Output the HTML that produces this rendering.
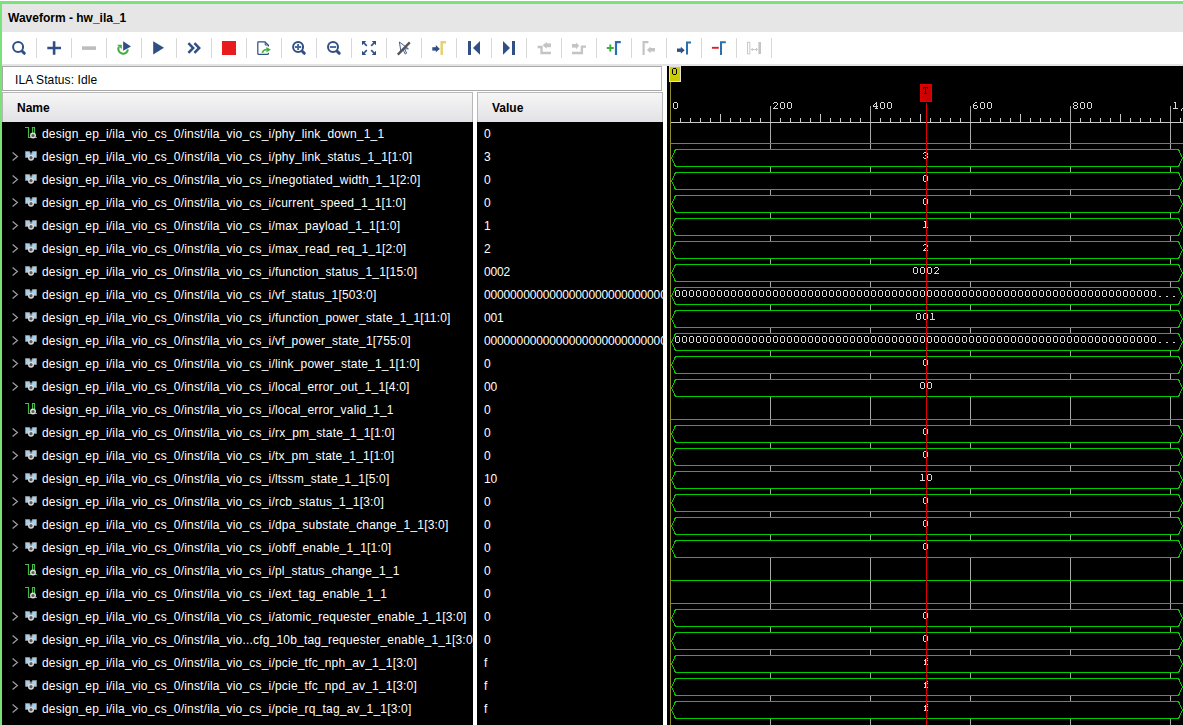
<!DOCTYPE html>
<html><head><meta charset="utf-8"><style>
*{margin:0;padding:0;box-sizing:border-box}
html,body{width:1183px;height:725px;overflow:hidden;background:#fff;font-family:"Liberation Sans",sans-serif}
#gtop{position:absolute;left:0;top:1px;width:1183px;height:3px;background:#79e279}
#gleft{position:absolute;left:0;top:1px;width:2px;height:724px;background:#79e279}
#title{position:absolute;left:2px;top:4px;width:1181px;height:28px;background:#e6e6e6}
#title span{position:absolute;left:6px;top:7px;font-weight:bold;font-size:12px;line-height:14px;color:#000}
#toolbar{position:absolute;left:2px;top:32px;width:1181px;height:32px;background:#fff}
.sep{position:absolute;top:6px;width:1px;height:20px;background:#d8d8d8}
.tbi{position:absolute}
#tline{position:absolute;left:2px;top:64px;width:1181px;height:2px;background:#e4e4e4}
#status{position:absolute;left:2px;top:66px;width:660px;height:25px;background:#fff;border:1px solid #a8a8a8;border-right-color:#b8b8b8}
#status span{position:absolute;left:12px;top:6px;font-size:12px;line-height:14px;color:#000;letter-spacing:0.1px}
.hdr{position:absolute;top:92px;height:30px;background:linear-gradient(#f6f6f6,#e2e2e6);border:1px solid #b8b8b8;border-bottom:none}
.hdr span{position:absolute;top:8px;font-weight:bold;font-size:12px;line-height:14px;color:#000}
#namecol{position:absolute;left:2px;top:122px;width:471px;height:603px;background:#000;overflow:hidden}
#valcol{position:absolute;left:477px;top:122px;width:186px;height:603px;background:#000;overflow:hidden}
.nm{position:absolute;left:40px;height:23px;line-height:23px;font-size:12px;color:#fff;white-space:nowrap;letter-spacing:0.19px}
.vl{position:absolute;left:7px;height:23px;line-height:23px;font-size:12px;color:#fff;white-space:nowrap;letter-spacing:-0.15px}
.ic{position:absolute;left:10px}
.arr{position:absolute;left:10px}
#wavebg{position:absolute;left:667px;top:66px;width:516px;height:659px;background:#000}
.rl{font-family:"Liberation Mono",monospace;font-size:10px;fill:#d8d8d8}
.wv{font-family:"Liberation Mono",monospace;font-size:11.67px;fill:#d8d8d8}
.mk{font-family:"Liberation Mono",monospace;font-size:10px;fill:#000}
.tm{font-family:"Liberation Serif",serif;font-weight:bold;font-size:10px;fill:#000}
</style></head><body>
<div id="gtop"></div><div id="gleft"></div>
<div id="title"><span>Waveform - hw_ila_1</span></div>
<div id="toolbar"><div class="sep" style="left:34px"></div><div class="sep" style="left:69px"></div><div class="sep" style="left:104px"></div><div class="sep" style="left:139px"></div><div class="sep" style="left:174px"></div><div class="sep" style="left:209px"></div><div class="sep" style="left:244px"></div><div class="sep" style="left:279px"></div><div class="sep" style="left:314px"></div><div class="sep" style="left:349px"></div><div class="sep" style="left:384px"></div><div class="sep" style="left:419px"></div><div class="sep" style="left:454px"></div><div class="sep" style="left:489px"></div><div class="sep" style="left:524px"></div><div class="sep" style="left:559px"></div><div class="sep" style="left:594px"></div><div class="sep" style="left:629px"></div><div class="sep" style="left:664px"></div><div class="sep" style="left:699px"></div><div class="sep" style="left:734px"></div><div class="sep" style="left:769px"></div></div>

<svg class="tbi" style="left:0px;top:32px" width="800" height="32">
 <!-- search -->
 <circle cx="18.1" cy="15" r="5" stroke="#2f4f85" stroke-width="2" fill="none"/>
 <path d="M22.6 19.6 L24.3 21.3" stroke="#2f4f85" stroke-width="3" stroke-linecap="round"/>
 <!-- plus -->
 <path d="M47.3 16 H61 M54.1 9.2 V22.8" stroke="#2f4f85" stroke-width="2.6"/>
 <!-- minus -->
 <path d="M82 16.1 H96" stroke="#bdbdbd" stroke-width="3.6"/>
 <!-- refresh-play -->
 <path d="M118.8 14.8 A4.8 4.8 0 1 0 127.9 17.3" stroke="#3bb03b" stroke-width="2" fill="none"/>
 <path d="M117 12.7 L121.8 12.7 L121.8 17 Z" fill="#3bb03b"/>
 <path d="M123.1 9.3 L131 14.4 L123.1 18.7 Z" fill="#2f4f85"/>
 <!-- play -->
 <path d="M153.2 9.2 L164 15.8 L153.2 22.6 Z" fill="#2f4f85"/>
 <!-- double chevron -->
 <path d="M188.4 11.2 L193.2 16 L188.4 20.8 M194.4 11.2 L199.2 16 L194.4 20.8" stroke="#2f4f85" stroke-width="2.5" fill="none"/>
 <!-- stop -->
 <rect x="222" y="9" width="14" height="14" fill="#e81c1c"/>
 <!-- export doc -->
 <path d="M268.4 14.4 V13.2 L265 9.8 H258.3 Q257.8 9.8 257.8 10.3 V21.8 Q257.8 22.3 258.3 22.3 H267.9 Q268.4 22.3 268.4 21.8 V20.8" stroke="#2f4f85" stroke-width="1.2" fill="none"/>
 <path d="M265.2 10 V13 H268.2" stroke="#2f4f85" stroke-width="1" fill="none"/>
 <path d="M262.4 20.9 Q262.9 17.7 266.8 17.5" stroke="#3bb03b" stroke-width="1.7" fill="none"/>
 <path d="M266.4 14.9 L270.9 17.7 L266.4 20.2 Z" fill="#3bb03b"/>
 <!-- zoom in -->
 <circle cx="298.1" cy="15" r="5" stroke="#2f4f85" stroke-width="2" fill="none"/>
 <path d="M295 15 H301.2 M298.1 11.9 V18.1" stroke="#4a6699" stroke-width="1.9"/>
 <path d="M302.6 19.6 L304.3 21.3" stroke="#2f4f85" stroke-width="3" stroke-linecap="round"/>
 <!-- zoom out -->
 <circle cx="333" cy="15" r="5" stroke="#2f4f85" stroke-width="2" fill="none"/>
 <path d="M329.9 15 H336.1" stroke="#4a6699" stroke-width="1.9"/>
 <path d="M337.5 19.6 L339.2 21.3" stroke="#2f4f85" stroke-width="3" stroke-linecap="round"/>
 <!-- zoom fit -->
 <g fill="#2f4f85">
  <path d="M362 9 H366.3 L362 13.3 Z"/><path d="M376 9 H371.7 L376 13.3 Z"/>
  <path d="M362 23 H366.3 L362 18.7 Z"/><path d="M376 23 H371.7 L376 18.7 Z"/>
 </g>
 <g stroke="#2f4f85" stroke-width="1.7">
  <path d="M363.5 10.5 L366.8 13.8"/><path d="M374.5 10.5 L371.2 13.8"/>
  <path d="M363.5 21.5 L366.8 18.2"/><path d="M374.5 21.5 L371.2 18.2"/>
 </g>
 <!-- cursor disabled -->
 <path d="M399.4 10 L401 20.2 L403 17.6 L405.2 22 L406.6 21.2 L404.6 16.8 L408.4 16.8 Z" stroke="#2f4f85" stroke-width="0.9" fill="#fff"/>
 <path d="M397.8 22.6 L409.8 10.4" stroke="#555" stroke-width="2.4"/>
 <!-- goto marker (blue arrow + yellow bracket) -->
 <rect x="432.3" y="15.2" width="4" height="3.4" fill="#2f4f85"/>
 <path d="M435.8 13 L439.8 16.9 L435.8 20.2 Z" fill="#2f4f85"/>
 <path d="M441.7 23 V10.2 H446" stroke="#e8d070" stroke-width="2.5" fill="none"/>
 <!-- first -->
 <rect x="468" y="9" width="3" height="14" fill="#2f4f85"/>
 <path d="M480 9 L473 15.9 L480 22.8 Z" fill="#2f4f85"/>
 <!-- last -->
 <path d="M503 9 L510 15.9 L503 22.8 Z" fill="#2f4f85"/>
 <rect x="512" y="9" width="3" height="14" fill="#2f4f85"/>
 <!-- prev edge disabled -->
 <path d="M537.6 15 H541.5 V21 H551" stroke="#c4c4c4" stroke-width="2.3" fill="none"/>
 <rect x="546" y="11.4" width="5" height="3.8" fill="#c4c4c4"/>
 <path d="M542.6 13.3 L546.8 10 L546.8 16.8 Z" fill="#c4c4c4"/>
 <!-- next edge disabled -->
 <path d="M572 21 H581.9 V14.6 H586" stroke="#c4c4c4" stroke-width="2.3" fill="none"/>
 <rect x="572" y="12" width="4.5" height="3.6" fill="#c4c4c4"/>
 <path d="M576 10.6 L579.2 13.8 L576 17.2 Z" fill="#c4c4c4"/>
 <!-- add marker -->
 <path d="M606.8 15.9 H613.8 M610.3 12.5 V19.5" stroke="#3bb03b" stroke-width="2"/>
 <path d="M616 23 V10.2 H620.8" stroke="#2a6fae" stroke-width="2.2" fill="none"/>
 <!-- prev marker disabled -->
 <path d="M643.6 23 V10.2 H648.4" stroke="#c4c4c4" stroke-width="2.2" fill="none"/>
 <rect x="650" y="16" width="5" height="3.5" fill="#c4c4c4"/>
 <path d="M646.9 17.9 L650.5 14.5 L650.5 21.3 Z" fill="#c4c4c4"/>
 <!-- next marker -->
 <rect x="677" y="16.5" width="4.3" height="3.4" fill="#2f4f85"/>
 <path d="M680.8 14.7 L684.7 18.2 L680.8 21.7 Z" fill="#2f4f85"/>
 <path d="M687 22.6 V10.6 H691" stroke="#2a6fae" stroke-width="2" fill="none"/>
 <!-- delete marker -->
 <path d="M711.9 15.8 H718.8" stroke="#e02020" stroke-width="1.9"/>
 <path d="M721 23 V10.2 H725.8" stroke="#2a6fae" stroke-width="2" fill="none"/>
 <!-- swap cursor disabled -->
 <rect x="747.5" y="10.3" width="2.3" height="11.5" fill="none" stroke="#c8c8c8" stroke-width="1"/>
 <rect x="758.4" y="10" width="2.6" height="12" fill="#c4c4c4"/>
 <path d="M751.3 17.5 H757.5 M752.8 16 L751.3 17.5 L752.8 19 M756 16 L757.5 17.5 L756 19" stroke="#c4c4c4" stroke-width="0.9" fill="none"/>
</svg>

<div id="tline"></div>
<div id="status"><span>ILA Status: Idle</span></div>
<div class="hdr" style="left:2px;width:471px"><span style="left:14px">Name</span></div>
<div class="hdr" style="left:477px;width:186px"><span style="left:14px">Value</span></div>
<div id="namecol"><svg class="ic" style="top:0px" width="30" height="23"><path d="M13 5.5 H16.5 V15.5 H25 M20.5 11 V5.5 H22.5 V11" stroke="#44bb44" stroke-width="1.15" fill="none"/><circle cx="21" cy="13.5" r="2.3" fill="#5a5a5a" stroke="#dadada" stroke-width="1.4"/></svg><div class="nm" style="top:1px">design_ep_i/ila_vio_cs_0/inst/ila_vio_cs_i/phy_link_down_1_1</div><svg class="ic" style="top:23px" width="30" height="23"><path d="M0.6 7.4 L5.4 11.5 L0.6 15.6" stroke="#9a9a9a" stroke-width="1.3" fill="none"/><path d="M13.5 6.5 H17.6 L19 10 L20.4 6.5 H24.5 V12.5 H13.5 Z" fill="#a6cfea" stroke="#8a8a8a" stroke-width="0.9"/><circle cx="19" cy="12.7" r="2.3" fill="#5a5a5a" stroke="#dadada" stroke-width="1.4"/></svg><div class="nm" style="top:24px">design_ep_i/ila_vio_cs_0/inst/ila_vio_cs_i/phy_link_status_1_1[1:0]</div><svg class="ic" style="top:46px" width="30" height="23"><path d="M0.6 7.4 L5.4 11.5 L0.6 15.6" stroke="#9a9a9a" stroke-width="1.3" fill="none"/><path d="M13.5 6.5 H17.6 L19 10 L20.4 6.5 H24.5 V12.5 H13.5 Z" fill="#a6cfea" stroke="#8a8a8a" stroke-width="0.9"/><circle cx="19" cy="12.7" r="2.3" fill="#5a5a5a" stroke="#dadada" stroke-width="1.4"/></svg><div class="nm" style="top:47px">design_ep_i/ila_vio_cs_0/inst/ila_vio_cs_i/negotiated_width_1_1[2:0]</div><svg class="ic" style="top:69px" width="30" height="23"><path d="M0.6 7.4 L5.4 11.5 L0.6 15.6" stroke="#9a9a9a" stroke-width="1.3" fill="none"/><path d="M13.5 6.5 H17.6 L19 10 L20.4 6.5 H24.5 V12.5 H13.5 Z" fill="#a6cfea" stroke="#8a8a8a" stroke-width="0.9"/><circle cx="19" cy="12.7" r="2.3" fill="#5a5a5a" stroke="#dadada" stroke-width="1.4"/></svg><div class="nm" style="top:70px">design_ep_i/ila_vio_cs_0/inst/ila_vio_cs_i/current_speed_1_1[1:0]</div><svg class="ic" style="top:92px" width="30" height="23"><path d="M0.6 7.4 L5.4 11.5 L0.6 15.6" stroke="#9a9a9a" stroke-width="1.3" fill="none"/><path d="M13.5 6.5 H17.6 L19 10 L20.4 6.5 H24.5 V12.5 H13.5 Z" fill="#a6cfea" stroke="#8a8a8a" stroke-width="0.9"/><circle cx="19" cy="12.7" r="2.3" fill="#5a5a5a" stroke="#dadada" stroke-width="1.4"/></svg><div class="nm" style="top:93px">design_ep_i/ila_vio_cs_0/inst/ila_vio_cs_i/max_payload_1_1[1:0]</div><svg class="ic" style="top:115px" width="30" height="23"><path d="M0.6 7.4 L5.4 11.5 L0.6 15.6" stroke="#9a9a9a" stroke-width="1.3" fill="none"/><path d="M13.5 6.5 H17.6 L19 10 L20.4 6.5 H24.5 V12.5 H13.5 Z" fill="#a6cfea" stroke="#8a8a8a" stroke-width="0.9"/><circle cx="19" cy="12.7" r="2.3" fill="#5a5a5a" stroke="#dadada" stroke-width="1.4"/></svg><div class="nm" style="top:116px">design_ep_i/ila_vio_cs_0/inst/ila_vio_cs_i/max_read_req_1_1[2:0]</div><svg class="ic" style="top:138px" width="30" height="23"><path d="M0.6 7.4 L5.4 11.5 L0.6 15.6" stroke="#9a9a9a" stroke-width="1.3" fill="none"/><path d="M13.5 6.5 H17.6 L19 10 L20.4 6.5 H24.5 V12.5 H13.5 Z" fill="#a6cfea" stroke="#8a8a8a" stroke-width="0.9"/><circle cx="19" cy="12.7" r="2.3" fill="#5a5a5a" stroke="#dadada" stroke-width="1.4"/></svg><div class="nm" style="top:139px">design_ep_i/ila_vio_cs_0/inst/ila_vio_cs_i/function_status_1_1[15:0]</div><svg class="ic" style="top:161px" width="30" height="23"><path d="M0.6 7.4 L5.4 11.5 L0.6 15.6" stroke="#9a9a9a" stroke-width="1.3" fill="none"/><path d="M13.5 6.5 H17.6 L19 10 L20.4 6.5 H24.5 V12.5 H13.5 Z" fill="#a6cfea" stroke="#8a8a8a" stroke-width="0.9"/><circle cx="19" cy="12.7" r="2.3" fill="#5a5a5a" stroke="#dadada" stroke-width="1.4"/></svg><div class="nm" style="top:162px">design_ep_i/ila_vio_cs_0/inst/ila_vio_cs_i/vf_status_1[503:0]</div><svg class="ic" style="top:184px" width="30" height="23"><path d="M0.6 7.4 L5.4 11.5 L0.6 15.6" stroke="#9a9a9a" stroke-width="1.3" fill="none"/><path d="M13.5 6.5 H17.6 L19 10 L20.4 6.5 H24.5 V12.5 H13.5 Z" fill="#a6cfea" stroke="#8a8a8a" stroke-width="0.9"/><circle cx="19" cy="12.7" r="2.3" fill="#5a5a5a" stroke="#dadada" stroke-width="1.4"/></svg><div class="nm" style="top:185px">design_ep_i/ila_vio_cs_0/inst/ila_vio_cs_i/function_power_state_1_1[11:0]</div><svg class="ic" style="top:207px" width="30" height="23"><path d="M0.6 7.4 L5.4 11.5 L0.6 15.6" stroke="#9a9a9a" stroke-width="1.3" fill="none"/><path d="M13.5 6.5 H17.6 L19 10 L20.4 6.5 H24.5 V12.5 H13.5 Z" fill="#a6cfea" stroke="#8a8a8a" stroke-width="0.9"/><circle cx="19" cy="12.7" r="2.3" fill="#5a5a5a" stroke="#dadada" stroke-width="1.4"/></svg><div class="nm" style="top:208px">design_ep_i/ila_vio_cs_0/inst/ila_vio_cs_i/vf_power_state_1[755:0]</div><svg class="ic" style="top:230px" width="30" height="23"><path d="M0.6 7.4 L5.4 11.5 L0.6 15.6" stroke="#9a9a9a" stroke-width="1.3" fill="none"/><path d="M13.5 6.5 H17.6 L19 10 L20.4 6.5 H24.5 V12.5 H13.5 Z" fill="#a6cfea" stroke="#8a8a8a" stroke-width="0.9"/><circle cx="19" cy="12.7" r="2.3" fill="#5a5a5a" stroke="#dadada" stroke-width="1.4"/></svg><div class="nm" style="top:231px">design_ep_i/ila_vio_cs_0/inst/ila_vio_cs_i/link_power_state_1_1[1:0]</div><svg class="ic" style="top:253px" width="30" height="23"><path d="M0.6 7.4 L5.4 11.5 L0.6 15.6" stroke="#9a9a9a" stroke-width="1.3" fill="none"/><path d="M13.5 6.5 H17.6 L19 10 L20.4 6.5 H24.5 V12.5 H13.5 Z" fill="#a6cfea" stroke="#8a8a8a" stroke-width="0.9"/><circle cx="19" cy="12.7" r="2.3" fill="#5a5a5a" stroke="#dadada" stroke-width="1.4"/></svg><div class="nm" style="top:254px">design_ep_i/ila_vio_cs_0/inst/ila_vio_cs_i/local_error_out_1_1[4:0]</div><svg class="ic" style="top:276px" width="30" height="23"><path d="M13 5.5 H16.5 V15.5 H25 M20.5 11 V5.5 H22.5 V11" stroke="#44bb44" stroke-width="1.15" fill="none"/><circle cx="21" cy="13.5" r="2.3" fill="#5a5a5a" stroke="#dadada" stroke-width="1.4"/></svg><div class="nm" style="top:277px">design_ep_i/ila_vio_cs_0/inst/ila_vio_cs_i/local_error_valid_1_1</div><svg class="ic" style="top:299px" width="30" height="23"><path d="M0.6 7.4 L5.4 11.5 L0.6 15.6" stroke="#9a9a9a" stroke-width="1.3" fill="none"/><path d="M13.5 6.5 H17.6 L19 10 L20.4 6.5 H24.5 V12.5 H13.5 Z" fill="#a6cfea" stroke="#8a8a8a" stroke-width="0.9"/><circle cx="19" cy="12.7" r="2.3" fill="#5a5a5a" stroke="#dadada" stroke-width="1.4"/></svg><div class="nm" style="top:300px">design_ep_i/ila_vio_cs_0/inst/ila_vio_cs_i/rx_pm_state_1_1[1:0]</div><svg class="ic" style="top:322px" width="30" height="23"><path d="M0.6 7.4 L5.4 11.5 L0.6 15.6" stroke="#9a9a9a" stroke-width="1.3" fill="none"/><path d="M13.5 6.5 H17.6 L19 10 L20.4 6.5 H24.5 V12.5 H13.5 Z" fill="#a6cfea" stroke="#8a8a8a" stroke-width="0.9"/><circle cx="19" cy="12.7" r="2.3" fill="#5a5a5a" stroke="#dadada" stroke-width="1.4"/></svg><div class="nm" style="top:323px">design_ep_i/ila_vio_cs_0/inst/ila_vio_cs_i/tx_pm_state_1_1[1:0]</div><svg class="ic" style="top:345px" width="30" height="23"><path d="M0.6 7.4 L5.4 11.5 L0.6 15.6" stroke="#9a9a9a" stroke-width="1.3" fill="none"/><path d="M13.5 6.5 H17.6 L19 10 L20.4 6.5 H24.5 V12.5 H13.5 Z" fill="#a6cfea" stroke="#8a8a8a" stroke-width="0.9"/><circle cx="19" cy="12.7" r="2.3" fill="#5a5a5a" stroke="#dadada" stroke-width="1.4"/></svg><div class="nm" style="top:346px">design_ep_i/ila_vio_cs_0/inst/ila_vio_cs_i/ltssm_state_1_1[5:0]</div><svg class="ic" style="top:368px" width="30" height="23"><path d="M0.6 7.4 L5.4 11.5 L0.6 15.6" stroke="#9a9a9a" stroke-width="1.3" fill="none"/><path d="M13.5 6.5 H17.6 L19 10 L20.4 6.5 H24.5 V12.5 H13.5 Z" fill="#a6cfea" stroke="#8a8a8a" stroke-width="0.9"/><circle cx="19" cy="12.7" r="2.3" fill="#5a5a5a" stroke="#dadada" stroke-width="1.4"/></svg><div class="nm" style="top:369px">design_ep_i/ila_vio_cs_0/inst/ila_vio_cs_i/rcb_status_1_1[3:0]</div><svg class="ic" style="top:391px" width="30" height="23"><path d="M0.6 7.4 L5.4 11.5 L0.6 15.6" stroke="#9a9a9a" stroke-width="1.3" fill="none"/><path d="M13.5 6.5 H17.6 L19 10 L20.4 6.5 H24.5 V12.5 H13.5 Z" fill="#a6cfea" stroke="#8a8a8a" stroke-width="0.9"/><circle cx="19" cy="12.7" r="2.3" fill="#5a5a5a" stroke="#dadada" stroke-width="1.4"/></svg><div class="nm" style="top:392px">design_ep_i/ila_vio_cs_0/inst/ila_vio_cs_i/dpa_substate_change_1_1[3:0]</div><svg class="ic" style="top:414px" width="30" height="23"><path d="M0.6 7.4 L5.4 11.5 L0.6 15.6" stroke="#9a9a9a" stroke-width="1.3" fill="none"/><path d="M13.5 6.5 H17.6 L19 10 L20.4 6.5 H24.5 V12.5 H13.5 Z" fill="#a6cfea" stroke="#8a8a8a" stroke-width="0.9"/><circle cx="19" cy="12.7" r="2.3" fill="#5a5a5a" stroke="#dadada" stroke-width="1.4"/></svg><div class="nm" style="top:415px">design_ep_i/ila_vio_cs_0/inst/ila_vio_cs_i/obff_enable_1_1[1:0]</div><svg class="ic" style="top:437px" width="30" height="23"><path d="M13 5.5 H16.5 V15.5 H25 M20.5 11 V5.5 H22.5 V11" stroke="#44bb44" stroke-width="1.15" fill="none"/><circle cx="21" cy="13.5" r="2.3" fill="#5a5a5a" stroke="#dadada" stroke-width="1.4"/></svg><div class="nm" style="top:438px">design_ep_i/ila_vio_cs_0/inst/ila_vio_cs_i/pl_status_change_1_1</div><svg class="ic" style="top:460px" width="30" height="23"><path d="M13 5.5 H16.5 V15.5 H25 M20.5 11 V5.5 H22.5 V11" stroke="#44bb44" stroke-width="1.15" fill="none"/><circle cx="21" cy="13.5" r="2.3" fill="#5a5a5a" stroke="#dadada" stroke-width="1.4"/></svg><div class="nm" style="top:461px">design_ep_i/ila_vio_cs_0/inst/ila_vio_cs_i/ext_tag_enable_1_1</div><svg class="ic" style="top:483px" width="30" height="23"><path d="M0.6 7.4 L5.4 11.5 L0.6 15.6" stroke="#9a9a9a" stroke-width="1.3" fill="none"/><path d="M13.5 6.5 H17.6 L19 10 L20.4 6.5 H24.5 V12.5 H13.5 Z" fill="#a6cfea" stroke="#8a8a8a" stroke-width="0.9"/><circle cx="19" cy="12.7" r="2.3" fill="#5a5a5a" stroke="#dadada" stroke-width="1.4"/></svg><div class="nm" style="top:484px">design_ep_i/ila_vio_cs_0/inst/ila_vio_cs_i/atomic_requester_enable_1_1[3:0]</div><svg class="ic" style="top:506px" width="30" height="23"><path d="M0.6 7.4 L5.4 11.5 L0.6 15.6" stroke="#9a9a9a" stroke-width="1.3" fill="none"/><path d="M13.5 6.5 H17.6 L19 10 L20.4 6.5 H24.5 V12.5 H13.5 Z" fill="#a6cfea" stroke="#8a8a8a" stroke-width="0.9"/><circle cx="19" cy="12.7" r="2.3" fill="#5a5a5a" stroke="#dadada" stroke-width="1.4"/></svg><div class="nm" style="top:507px">design_ep_i/ila_vio_cs_0/inst/ila_vio...cfg_10b_tag_requester_enable_1_1[3:0]</div><svg class="ic" style="top:529px" width="30" height="23"><path d="M0.6 7.4 L5.4 11.5 L0.6 15.6" stroke="#9a9a9a" stroke-width="1.3" fill="none"/><path d="M13.5 6.5 H17.6 L19 10 L20.4 6.5 H24.5 V12.5 H13.5 Z" fill="#a6cfea" stroke="#8a8a8a" stroke-width="0.9"/><circle cx="19" cy="12.7" r="2.3" fill="#5a5a5a" stroke="#dadada" stroke-width="1.4"/></svg><div class="nm" style="top:530px">design_ep_i/ila_vio_cs_0/inst/ila_vio_cs_i/pcie_tfc_nph_av_1_1[3:0]</div><svg class="ic" style="top:552px" width="30" height="23"><path d="M0.6 7.4 L5.4 11.5 L0.6 15.6" stroke="#9a9a9a" stroke-width="1.3" fill="none"/><path d="M13.5 6.5 H17.6 L19 10 L20.4 6.5 H24.5 V12.5 H13.5 Z" fill="#a6cfea" stroke="#8a8a8a" stroke-width="0.9"/><circle cx="19" cy="12.7" r="2.3" fill="#5a5a5a" stroke="#dadada" stroke-width="1.4"/></svg><div class="nm" style="top:553px">design_ep_i/ila_vio_cs_0/inst/ila_vio_cs_i/pcie_tfc_npd_av_1_1[3:0]</div><svg class="ic" style="top:575px" width="30" height="23"><path d="M0.6 7.4 L5.4 11.5 L0.6 15.6" stroke="#9a9a9a" stroke-width="1.3" fill="none"/><path d="M13.5 6.5 H17.6 L19 10 L20.4 6.5 H24.5 V12.5 H13.5 Z" fill="#a6cfea" stroke="#8a8a8a" stroke-width="0.9"/><circle cx="19" cy="12.7" r="2.3" fill="#5a5a5a" stroke="#dadada" stroke-width="1.4"/></svg><div class="nm" style="top:576px">design_ep_i/ila_vio_cs_0/inst/ila_vio_cs_i/pcie_rq_tag_av_1_1[3:0]</div></div>
<div id="valcol"><div class="vl" style="top:1px">0</div><div class="vl" style="top:24px">3</div><div class="vl" style="top:47px">0</div><div class="vl" style="top:70px">0</div><div class="vl" style="top:93px">1</div><div class="vl" style="top:116px">2</div><div class="vl" style="top:139px">0002</div><div class="vl" style="top:162px">0000000000000000000000000000000000000000</div><div class="vl" style="top:185px">001</div><div class="vl" style="top:208px">0000000000000000000000000000000000000000</div><div class="vl" style="top:231px">0</div><div class="vl" style="top:254px">00</div><div class="vl" style="top:277px">0</div><div class="vl" style="top:300px">0</div><div class="vl" style="top:323px">0</div><div class="vl" style="top:346px">10</div><div class="vl" style="top:369px">0</div><div class="vl" style="top:392px">0</div><div class="vl" style="top:415px">0</div><div class="vl" style="top:438px">0</div><div class="vl" style="top:461px">0</div><div class="vl" style="top:484px">0</div><div class="vl" style="top:507px">0</div><div class="vl" style="top:530px">f</div><div class="vl" style="top:553px">f</div><div class="vl" style="top:576px">f</div></div>
<div id="wavebg"></div>
<svg id="wave" width="516" height="659" style="position:absolute;left:667px;top:66px" shape-rendering="crispEdges"><line x1="103.5" y1="40" x2="103.5" y2="659" stroke="#a8a8a8" stroke-width="1"/><line x1="203.5" y1="40" x2="203.5" y2="659" stroke="#a8a8a8" stroke-width="1"/><line x1="303.5" y1="40" x2="303.5" y2="659" stroke="#a8a8a8" stroke-width="1"/><line x1="403.5" y1="40" x2="403.5" y2="659" stroke="#a8a8a8" stroke-width="1"/><line x1="503.5" y1="40" x2="503.5" y2="659" stroke="#a8a8a8" stroke-width="1"/><line x1="3" y1="56.5" x2="516" y2="56.5" stroke="#c8c8c8" stroke-width="1"/><line x1="13.5" y1="52" x2="13.5" y2="56" stroke="#c8c8c8" stroke-width="1"/><line x1="23.5" y1="52" x2="23.5" y2="56" stroke="#c8c8c8" stroke-width="1"/><line x1="33.5" y1="52" x2="33.5" y2="56" stroke="#c8c8c8" stroke-width="1"/><line x1="43.5" y1="52" x2="43.5" y2="56" stroke="#c8c8c8" stroke-width="1"/><line x1="53.5" y1="48" x2="53.5" y2="56" stroke="#c8c8c8" stroke-width="1"/><line x1="63.5" y1="52" x2="63.5" y2="56" stroke="#c8c8c8" stroke-width="1"/><line x1="73.5" y1="52" x2="73.5" y2="56" stroke="#c8c8c8" stroke-width="1"/><line x1="83.5" y1="52" x2="83.5" y2="56" stroke="#c8c8c8" stroke-width="1"/><line x1="93.5" y1="52" x2="93.5" y2="56" stroke="#c8c8c8" stroke-width="1"/><line x1="113.5" y1="52" x2="113.5" y2="56" stroke="#c8c8c8" stroke-width="1"/><line x1="123.5" y1="52" x2="123.5" y2="56" stroke="#c8c8c8" stroke-width="1"/><line x1="133.5" y1="52" x2="133.5" y2="56" stroke="#c8c8c8" stroke-width="1"/><line x1="143.5" y1="52" x2="143.5" y2="56" stroke="#c8c8c8" stroke-width="1"/><line x1="153.5" y1="48" x2="153.5" y2="56" stroke="#c8c8c8" stroke-width="1"/><line x1="163.5" y1="52" x2="163.5" y2="56" stroke="#c8c8c8" stroke-width="1"/><line x1="173.5" y1="52" x2="173.5" y2="56" stroke="#c8c8c8" stroke-width="1"/><line x1="183.5" y1="52" x2="183.5" y2="56" stroke="#c8c8c8" stroke-width="1"/><line x1="193.5" y1="52" x2="193.5" y2="56" stroke="#c8c8c8" stroke-width="1"/><line x1="213.5" y1="52" x2="213.5" y2="56" stroke="#c8c8c8" stroke-width="1"/><line x1="223.5" y1="52" x2="223.5" y2="56" stroke="#c8c8c8" stroke-width="1"/><line x1="233.5" y1="52" x2="233.5" y2="56" stroke="#c8c8c8" stroke-width="1"/><line x1="243.5" y1="52" x2="243.5" y2="56" stroke="#c8c8c8" stroke-width="1"/><line x1="253.5" y1="48" x2="253.5" y2="56" stroke="#c8c8c8" stroke-width="1"/><line x1="263.5" y1="52" x2="263.5" y2="56" stroke="#c8c8c8" stroke-width="1"/><line x1="273.5" y1="52" x2="273.5" y2="56" stroke="#c8c8c8" stroke-width="1"/><line x1="283.5" y1="52" x2="283.5" y2="56" stroke="#c8c8c8" stroke-width="1"/><line x1="293.5" y1="52" x2="293.5" y2="56" stroke="#c8c8c8" stroke-width="1"/><line x1="313.5" y1="52" x2="313.5" y2="56" stroke="#c8c8c8" stroke-width="1"/><line x1="323.5" y1="52" x2="323.5" y2="56" stroke="#c8c8c8" stroke-width="1"/><line x1="333.5" y1="52" x2="333.5" y2="56" stroke="#c8c8c8" stroke-width="1"/><line x1="343.5" y1="52" x2="343.5" y2="56" stroke="#c8c8c8" stroke-width="1"/><line x1="353.5" y1="48" x2="353.5" y2="56" stroke="#c8c8c8" stroke-width="1"/><line x1="363.5" y1="52" x2="363.5" y2="56" stroke="#c8c8c8" stroke-width="1"/><line x1="373.5" y1="52" x2="373.5" y2="56" stroke="#c8c8c8" stroke-width="1"/><line x1="383.5" y1="52" x2="383.5" y2="56" stroke="#c8c8c8" stroke-width="1"/><line x1="393.5" y1="52" x2="393.5" y2="56" stroke="#c8c8c8" stroke-width="1"/><line x1="413.5" y1="52" x2="413.5" y2="56" stroke="#c8c8c8" stroke-width="1"/><line x1="423.5" y1="52" x2="423.5" y2="56" stroke="#c8c8c8" stroke-width="1"/><line x1="433.5" y1="52" x2="433.5" y2="56" stroke="#c8c8c8" stroke-width="1"/><line x1="443.5" y1="52" x2="443.5" y2="56" stroke="#c8c8c8" stroke-width="1"/><line x1="453.5" y1="48" x2="453.5" y2="56" stroke="#c8c8c8" stroke-width="1"/><line x1="463.5" y1="52" x2="463.5" y2="56" stroke="#c8c8c8" stroke-width="1"/><line x1="473.5" y1="52" x2="473.5" y2="56" stroke="#c8c8c8" stroke-width="1"/><line x1="483.5" y1="52" x2="483.5" y2="56" stroke="#c8c8c8" stroke-width="1"/><line x1="493.5" y1="52" x2="493.5" y2="56" stroke="#c8c8c8" stroke-width="1"/><line x1="513.5" y1="52" x2="513.5" y2="56" stroke="#c8c8c8" stroke-width="1"/><path d="M7 36h3v1h-3zM6 37h1v1h-1zM10 37h1v1h-1zM6 38h1v1h-1zM10 38h1v1h-1zM6 39h1v1h-1zM10 39h1v1h-1zM6 40h1v1h-1zM10 40h1v1h-1zM6 41h1v1h-1zM10 41h1v1h-1zM7 42h3v1h-3zM107 36h3v1h-3zM106 37h1v1h-1zM110 37h1v1h-1zM110 38h1v1h-1zM109 39h1v1h-1zM108 40h1v1h-1zM107 41h1v1h-1zM106 42h5v1h-5zM114 36h3v1h-3zM113 37h1v1h-1zM117 37h1v1h-1zM113 38h1v1h-1zM117 38h1v1h-1zM113 39h1v1h-1zM117 39h1v1h-1zM113 40h1v1h-1zM117 40h1v1h-1zM113 41h1v1h-1zM117 41h1v1h-1zM114 42h3v1h-3zM121 36h3v1h-3zM120 37h1v1h-1zM124 37h1v1h-1zM120 38h1v1h-1zM124 38h1v1h-1zM120 39h1v1h-1zM124 39h1v1h-1zM120 40h1v1h-1zM124 40h1v1h-1zM120 41h1v1h-1zM124 41h1v1h-1zM121 42h3v1h-3zM209 36h1v1h-1zM208 37h2v1h-2zM207 38h1v1h-1zM209 38h1v1h-1zM206 39h1v1h-1zM209 39h1v1h-1zM206 40h5v1h-5zM209 41h1v1h-1zM208 42h3v1h-3zM214 36h3v1h-3zM213 37h1v1h-1zM217 37h1v1h-1zM213 38h1v1h-1zM217 38h1v1h-1zM213 39h1v1h-1zM217 39h1v1h-1zM213 40h1v1h-1zM217 40h1v1h-1zM213 41h1v1h-1zM217 41h1v1h-1zM214 42h3v1h-3zM221 36h3v1h-3zM220 37h1v1h-1zM224 37h1v1h-1zM220 38h1v1h-1zM224 38h1v1h-1zM220 39h1v1h-1zM224 39h1v1h-1zM220 40h1v1h-1zM224 40h1v1h-1zM220 41h1v1h-1zM224 41h1v1h-1zM221 42h3v1h-3zM308 36h2v1h-2zM307 37h1v1h-1zM306 38h1v1h-1zM306 39h4v1h-4zM306 40h1v1h-1zM310 40h1v1h-1zM306 41h1v1h-1zM310 41h1v1h-1zM307 42h3v1h-3zM314 36h3v1h-3zM313 37h1v1h-1zM317 37h1v1h-1zM313 38h1v1h-1zM317 38h1v1h-1zM313 39h1v1h-1zM317 39h1v1h-1zM313 40h1v1h-1zM317 40h1v1h-1zM313 41h1v1h-1zM317 41h1v1h-1zM314 42h3v1h-3zM321 36h3v1h-3zM320 37h1v1h-1zM324 37h1v1h-1zM320 38h1v1h-1zM324 38h1v1h-1zM320 39h1v1h-1zM324 39h1v1h-1zM320 40h1v1h-1zM324 40h1v1h-1zM320 41h1v1h-1zM324 41h1v1h-1zM321 42h3v1h-3zM407 36h3v1h-3zM406 37h1v1h-1zM410 37h1v1h-1zM406 38h1v1h-1zM410 38h1v1h-1zM407 39h3v1h-3zM406 40h1v1h-1zM410 40h1v1h-1zM406 41h1v1h-1zM410 41h1v1h-1zM407 42h3v1h-3zM414 36h3v1h-3zM413 37h1v1h-1zM417 37h1v1h-1zM413 38h1v1h-1zM417 38h1v1h-1zM413 39h1v1h-1zM417 39h1v1h-1zM413 40h1v1h-1zM417 40h1v1h-1zM413 41h1v1h-1zM417 41h1v1h-1zM414 42h3v1h-3zM421 36h3v1h-3zM420 37h1v1h-1zM424 37h1v1h-1zM420 38h1v1h-1zM424 38h1v1h-1zM420 39h1v1h-1zM424 39h1v1h-1zM420 40h1v1h-1zM424 40h1v1h-1zM420 41h1v1h-1zM424 41h1v1h-1zM421 42h3v1h-3zM507 36h2v1h-2zM508 37h1v1h-1zM508 38h1v1h-1zM508 39h1v1h-1zM508 40h1v1h-1zM508 41h1v1h-1zM506 42h5v1h-5zM515 42h2v1h-2zM514 43h1v1h-1zM514 44h1v1h-1z" fill="#d8d8d8"/><line x1="3" y1="77.5" x2="516" y2="77.5" stroke="#00cc00" stroke-width="1"/><polygon points="4.5,92.0 8.5,83.5 511.5,83.5 515.5,92.0 511.5,100.5 8.5,100.5" fill="#000" stroke="#00cc00" stroke-width="1"/><polygon points="4.5,115.0 8.5,106.5 511.5,106.5 515.5,115.0 511.5,123.5 8.5,123.5" fill="#000" stroke="#00cc00" stroke-width="1"/><polygon points="4.5,138.0 8.5,129.5 511.5,129.5 515.5,138.0 511.5,146.5 8.5,146.5" fill="#000" stroke="#00cc00" stroke-width="1"/><polygon points="4.5,161.0 8.5,152.5 511.5,152.5 515.5,161.0 511.5,169.5 8.5,169.5" fill="#000" stroke="#00cc00" stroke-width="1"/><polygon points="4.5,184.0 8.5,175.5 511.5,175.5 515.5,184.0 511.5,192.5 8.5,192.5" fill="#000" stroke="#00cc00" stroke-width="1"/><polygon points="4.5,207.0 8.5,198.5 511.5,198.5 515.5,207.0 511.5,215.5 8.5,215.5" fill="#000" stroke="#00cc00" stroke-width="1"/><polygon points="4.5,230.0 8.5,221.5 511.5,221.5 515.5,230.0 511.5,238.5 8.5,238.5" fill="#000" stroke="#00cc00" stroke-width="1"/><polygon points="4.5,253.0 8.5,244.5 511.5,244.5 515.5,253.0 511.5,261.5 8.5,261.5" fill="#000" stroke="#00cc00" stroke-width="1"/><polygon points="4.5,276.0 8.5,267.5 511.5,267.5 515.5,276.0 511.5,284.5 8.5,284.5" fill="#000" stroke="#00cc00" stroke-width="1"/><polygon points="4.5,299.0 8.5,290.5 511.5,290.5 515.5,299.0 511.5,307.5 8.5,307.5" fill="#000" stroke="#00cc00" stroke-width="1"/><polygon points="4.5,322.0 8.5,313.5 511.5,313.5 515.5,322.0 511.5,330.5 8.5,330.5" fill="#000" stroke="#00cc00" stroke-width="1"/><line x1="3" y1="353.5" x2="516" y2="353.5" stroke="#00cc00" stroke-width="1"/><polygon points="4.5,368.0 8.5,359.5 511.5,359.5 515.5,368.0 511.5,376.5 8.5,376.5" fill="#000" stroke="#00cc00" stroke-width="1"/><polygon points="4.5,391.0 8.5,382.5 511.5,382.5 515.5,391.0 511.5,399.5 8.5,399.5" fill="#000" stroke="#00cc00" stroke-width="1"/><polygon points="4.5,414.0 8.5,405.5 511.5,405.5 515.5,414.0 511.5,422.5 8.5,422.5" fill="#000" stroke="#00cc00" stroke-width="1"/><polygon points="4.5,437.0 8.5,428.5 511.5,428.5 515.5,437.0 511.5,445.5 8.5,445.5" fill="#000" stroke="#00cc00" stroke-width="1"/><polygon points="4.5,460.0 8.5,451.5 511.5,451.5 515.5,460.0 511.5,468.5 8.5,468.5" fill="#000" stroke="#00cc00" stroke-width="1"/><polygon points="4.5,483.0 8.5,474.5 511.5,474.5 515.5,483.0 511.5,491.5 8.5,491.5" fill="#000" stroke="#00cc00" stroke-width="1"/><line x1="3" y1="514.5" x2="516" y2="514.5" stroke="#00cc00" stroke-width="1"/><line x1="3" y1="537.5" x2="516" y2="537.5" stroke="#00cc00" stroke-width="1"/><polygon points="4.5,552.0 8.5,543.5 511.5,543.5 515.5,552.0 511.5,560.5 8.5,560.5" fill="#000" stroke="#00cc00" stroke-width="1"/><polygon points="4.5,575.0 8.5,566.5 511.5,566.5 515.5,575.0 511.5,583.5 8.5,583.5" fill="#000" stroke="#00cc00" stroke-width="1"/><polygon points="4.5,598.0 8.5,589.5 511.5,589.5 515.5,598.0 511.5,606.5 8.5,606.5" fill="#000" stroke="#00cc00" stroke-width="1"/><polygon points="4.5,621.0 8.5,612.5 511.5,612.5 515.5,621.0 511.5,629.5 8.5,629.5" fill="#000" stroke="#00cc00" stroke-width="1"/><polygon points="4.5,644.0 8.5,635.5 511.5,635.5 515.5,644.0 511.5,652.5 8.5,652.5" fill="#000" stroke="#00cc00" stroke-width="1"/><path d="M257 86h3v1h-3zM256 87h1v1h-1zM260 87h1v1h-1zM260 88h1v1h-1zM258 89h2v1h-2zM260 90h1v1h-1zM256 91h1v1h-1zM260 91h1v1h-1zM257 92h3v1h-3zM257 109h3v1h-3zM256 110h1v1h-1zM260 110h1v1h-1zM256 111h1v1h-1zM260 111h1v1h-1zM256 112h1v1h-1zM260 112h1v1h-1zM256 113h1v1h-1zM260 113h1v1h-1zM256 114h1v1h-1zM260 114h1v1h-1zM257 115h3v1h-3zM257 132h3v1h-3zM256 133h1v1h-1zM260 133h1v1h-1zM256 134h1v1h-1zM260 134h1v1h-1zM256 135h1v1h-1zM260 135h1v1h-1zM256 136h1v1h-1zM260 136h1v1h-1zM256 137h1v1h-1zM260 137h1v1h-1zM257 138h3v1h-3zM257 155h2v1h-2zM258 156h1v1h-1zM258 157h1v1h-1zM258 158h1v1h-1zM258 159h1v1h-1zM258 160h1v1h-1zM256 161h5v1h-5zM257 178h3v1h-3zM256 179h1v1h-1zM260 179h1v1h-1zM260 180h1v1h-1zM259 181h1v1h-1zM258 182h1v1h-1zM257 183h1v1h-1zM256 184h5v1h-5zM247 201h3v1h-3zM246 202h1v1h-1zM250 202h1v1h-1zM246 203h1v1h-1zM250 203h1v1h-1zM246 204h1v1h-1zM250 204h1v1h-1zM246 205h1v1h-1zM250 205h1v1h-1zM246 206h1v1h-1zM250 206h1v1h-1zM247 207h3v1h-3zM254 201h3v1h-3zM253 202h1v1h-1zM257 202h1v1h-1zM253 203h1v1h-1zM257 203h1v1h-1zM253 204h1v1h-1zM257 204h1v1h-1zM253 205h1v1h-1zM257 205h1v1h-1zM253 206h1v1h-1zM257 206h1v1h-1zM254 207h3v1h-3zM261 201h3v1h-3zM260 202h1v1h-1zM264 202h1v1h-1zM260 203h1v1h-1zM264 203h1v1h-1zM260 204h1v1h-1zM264 204h1v1h-1zM260 205h1v1h-1zM264 205h1v1h-1zM260 206h1v1h-1zM264 206h1v1h-1zM261 207h3v1h-3zM268 201h3v1h-3zM267 202h1v1h-1zM271 202h1v1h-1zM271 203h1v1h-1zM270 204h1v1h-1zM269 205h1v1h-1zM268 206h1v1h-1zM267 207h5v1h-5zM9 224h3v1h-3zM8 225h1v1h-1zM12 225h1v1h-1zM8 226h1v1h-1zM12 226h1v1h-1zM8 227h1v1h-1zM12 227h1v1h-1zM8 228h1v1h-1zM12 228h1v1h-1zM8 229h1v1h-1zM12 229h1v1h-1zM9 230h3v1h-3zM16 224h3v1h-3zM15 225h1v1h-1zM19 225h1v1h-1zM15 226h1v1h-1zM19 226h1v1h-1zM15 227h1v1h-1zM19 227h1v1h-1zM15 228h1v1h-1zM19 228h1v1h-1zM15 229h1v1h-1zM19 229h1v1h-1zM16 230h3v1h-3zM23 224h3v1h-3zM22 225h1v1h-1zM26 225h1v1h-1zM22 226h1v1h-1zM26 226h1v1h-1zM22 227h1v1h-1zM26 227h1v1h-1zM22 228h1v1h-1zM26 228h1v1h-1zM22 229h1v1h-1zM26 229h1v1h-1zM23 230h3v1h-3zM30 224h3v1h-3zM29 225h1v1h-1zM33 225h1v1h-1zM29 226h1v1h-1zM33 226h1v1h-1zM29 227h1v1h-1zM33 227h1v1h-1zM29 228h1v1h-1zM33 228h1v1h-1zM29 229h1v1h-1zM33 229h1v1h-1zM30 230h3v1h-3zM37 224h3v1h-3zM36 225h1v1h-1zM40 225h1v1h-1zM36 226h1v1h-1zM40 226h1v1h-1zM36 227h1v1h-1zM40 227h1v1h-1zM36 228h1v1h-1zM40 228h1v1h-1zM36 229h1v1h-1zM40 229h1v1h-1zM37 230h3v1h-3zM44 224h3v1h-3zM43 225h1v1h-1zM47 225h1v1h-1zM43 226h1v1h-1zM47 226h1v1h-1zM43 227h1v1h-1zM47 227h1v1h-1zM43 228h1v1h-1zM47 228h1v1h-1zM43 229h1v1h-1zM47 229h1v1h-1zM44 230h3v1h-3zM51 224h3v1h-3zM50 225h1v1h-1zM54 225h1v1h-1zM50 226h1v1h-1zM54 226h1v1h-1zM50 227h1v1h-1zM54 227h1v1h-1zM50 228h1v1h-1zM54 228h1v1h-1zM50 229h1v1h-1zM54 229h1v1h-1zM51 230h3v1h-3zM58 224h3v1h-3zM57 225h1v1h-1zM61 225h1v1h-1zM57 226h1v1h-1zM61 226h1v1h-1zM57 227h1v1h-1zM61 227h1v1h-1zM57 228h1v1h-1zM61 228h1v1h-1zM57 229h1v1h-1zM61 229h1v1h-1zM58 230h3v1h-3zM65 224h3v1h-3zM64 225h1v1h-1zM68 225h1v1h-1zM64 226h1v1h-1zM68 226h1v1h-1zM64 227h1v1h-1zM68 227h1v1h-1zM64 228h1v1h-1zM68 228h1v1h-1zM64 229h1v1h-1zM68 229h1v1h-1zM65 230h3v1h-3zM72 224h3v1h-3zM71 225h1v1h-1zM75 225h1v1h-1zM71 226h1v1h-1zM75 226h1v1h-1zM71 227h1v1h-1zM75 227h1v1h-1zM71 228h1v1h-1zM75 228h1v1h-1zM71 229h1v1h-1zM75 229h1v1h-1zM72 230h3v1h-3zM79 224h3v1h-3zM78 225h1v1h-1zM82 225h1v1h-1zM78 226h1v1h-1zM82 226h1v1h-1zM78 227h1v1h-1zM82 227h1v1h-1zM78 228h1v1h-1zM82 228h1v1h-1zM78 229h1v1h-1zM82 229h1v1h-1zM79 230h3v1h-3zM86 224h3v1h-3zM85 225h1v1h-1zM89 225h1v1h-1zM85 226h1v1h-1zM89 226h1v1h-1zM85 227h1v1h-1zM89 227h1v1h-1zM85 228h1v1h-1zM89 228h1v1h-1zM85 229h1v1h-1zM89 229h1v1h-1zM86 230h3v1h-3zM93 224h3v1h-3zM92 225h1v1h-1zM96 225h1v1h-1zM92 226h1v1h-1zM96 226h1v1h-1zM92 227h1v1h-1zM96 227h1v1h-1zM92 228h1v1h-1zM96 228h1v1h-1zM92 229h1v1h-1zM96 229h1v1h-1zM93 230h3v1h-3zM100 224h3v1h-3zM99 225h1v1h-1zM103 225h1v1h-1zM99 226h1v1h-1zM103 226h1v1h-1zM99 227h1v1h-1zM103 227h1v1h-1zM99 228h1v1h-1zM103 228h1v1h-1zM99 229h1v1h-1zM103 229h1v1h-1zM100 230h3v1h-3zM107 224h3v1h-3zM106 225h1v1h-1zM110 225h1v1h-1zM106 226h1v1h-1zM110 226h1v1h-1zM106 227h1v1h-1zM110 227h1v1h-1zM106 228h1v1h-1zM110 228h1v1h-1zM106 229h1v1h-1zM110 229h1v1h-1zM107 230h3v1h-3zM114 224h3v1h-3zM113 225h1v1h-1zM117 225h1v1h-1zM113 226h1v1h-1zM117 226h1v1h-1zM113 227h1v1h-1zM117 227h1v1h-1zM113 228h1v1h-1zM117 228h1v1h-1zM113 229h1v1h-1zM117 229h1v1h-1zM114 230h3v1h-3zM121 224h3v1h-3zM120 225h1v1h-1zM124 225h1v1h-1zM120 226h1v1h-1zM124 226h1v1h-1zM120 227h1v1h-1zM124 227h1v1h-1zM120 228h1v1h-1zM124 228h1v1h-1zM120 229h1v1h-1zM124 229h1v1h-1zM121 230h3v1h-3zM128 224h3v1h-3zM127 225h1v1h-1zM131 225h1v1h-1zM127 226h1v1h-1zM131 226h1v1h-1zM127 227h1v1h-1zM131 227h1v1h-1zM127 228h1v1h-1zM131 228h1v1h-1zM127 229h1v1h-1zM131 229h1v1h-1zM128 230h3v1h-3zM135 224h3v1h-3zM134 225h1v1h-1zM138 225h1v1h-1zM134 226h1v1h-1zM138 226h1v1h-1zM134 227h1v1h-1zM138 227h1v1h-1zM134 228h1v1h-1zM138 228h1v1h-1zM134 229h1v1h-1zM138 229h1v1h-1zM135 230h3v1h-3zM142 224h3v1h-3zM141 225h1v1h-1zM145 225h1v1h-1zM141 226h1v1h-1zM145 226h1v1h-1zM141 227h1v1h-1zM145 227h1v1h-1zM141 228h1v1h-1zM145 228h1v1h-1zM141 229h1v1h-1zM145 229h1v1h-1zM142 230h3v1h-3zM149 224h3v1h-3zM148 225h1v1h-1zM152 225h1v1h-1zM148 226h1v1h-1zM152 226h1v1h-1zM148 227h1v1h-1zM152 227h1v1h-1zM148 228h1v1h-1zM152 228h1v1h-1zM148 229h1v1h-1zM152 229h1v1h-1zM149 230h3v1h-3zM156 224h3v1h-3zM155 225h1v1h-1zM159 225h1v1h-1zM155 226h1v1h-1zM159 226h1v1h-1zM155 227h1v1h-1zM159 227h1v1h-1zM155 228h1v1h-1zM159 228h1v1h-1zM155 229h1v1h-1zM159 229h1v1h-1zM156 230h3v1h-3zM163 224h3v1h-3zM162 225h1v1h-1zM166 225h1v1h-1zM162 226h1v1h-1zM166 226h1v1h-1zM162 227h1v1h-1zM166 227h1v1h-1zM162 228h1v1h-1zM166 228h1v1h-1zM162 229h1v1h-1zM166 229h1v1h-1zM163 230h3v1h-3zM170 224h3v1h-3zM169 225h1v1h-1zM173 225h1v1h-1zM169 226h1v1h-1zM173 226h1v1h-1zM169 227h1v1h-1zM173 227h1v1h-1zM169 228h1v1h-1zM173 228h1v1h-1zM169 229h1v1h-1zM173 229h1v1h-1zM170 230h3v1h-3zM177 224h3v1h-3zM176 225h1v1h-1zM180 225h1v1h-1zM176 226h1v1h-1zM180 226h1v1h-1zM176 227h1v1h-1zM180 227h1v1h-1zM176 228h1v1h-1zM180 228h1v1h-1zM176 229h1v1h-1zM180 229h1v1h-1zM177 230h3v1h-3zM184 224h3v1h-3zM183 225h1v1h-1zM187 225h1v1h-1zM183 226h1v1h-1zM187 226h1v1h-1zM183 227h1v1h-1zM187 227h1v1h-1zM183 228h1v1h-1zM187 228h1v1h-1zM183 229h1v1h-1zM187 229h1v1h-1zM184 230h3v1h-3zM191 224h3v1h-3zM190 225h1v1h-1zM194 225h1v1h-1zM190 226h1v1h-1zM194 226h1v1h-1zM190 227h1v1h-1zM194 227h1v1h-1zM190 228h1v1h-1zM194 228h1v1h-1zM190 229h1v1h-1zM194 229h1v1h-1zM191 230h3v1h-3zM198 224h3v1h-3zM197 225h1v1h-1zM201 225h1v1h-1zM197 226h1v1h-1zM201 226h1v1h-1zM197 227h1v1h-1zM201 227h1v1h-1zM197 228h1v1h-1zM201 228h1v1h-1zM197 229h1v1h-1zM201 229h1v1h-1zM198 230h3v1h-3zM205 224h3v1h-3zM204 225h1v1h-1zM208 225h1v1h-1zM204 226h1v1h-1zM208 226h1v1h-1zM204 227h1v1h-1zM208 227h1v1h-1zM204 228h1v1h-1zM208 228h1v1h-1zM204 229h1v1h-1zM208 229h1v1h-1zM205 230h3v1h-3zM212 224h3v1h-3zM211 225h1v1h-1zM215 225h1v1h-1zM211 226h1v1h-1zM215 226h1v1h-1zM211 227h1v1h-1zM215 227h1v1h-1zM211 228h1v1h-1zM215 228h1v1h-1zM211 229h1v1h-1zM215 229h1v1h-1zM212 230h3v1h-3zM219 224h3v1h-3zM218 225h1v1h-1zM222 225h1v1h-1zM218 226h1v1h-1zM222 226h1v1h-1zM218 227h1v1h-1zM222 227h1v1h-1zM218 228h1v1h-1zM222 228h1v1h-1zM218 229h1v1h-1zM222 229h1v1h-1zM219 230h3v1h-3zM226 224h3v1h-3zM225 225h1v1h-1zM229 225h1v1h-1zM225 226h1v1h-1zM229 226h1v1h-1zM225 227h1v1h-1zM229 227h1v1h-1zM225 228h1v1h-1zM229 228h1v1h-1zM225 229h1v1h-1zM229 229h1v1h-1zM226 230h3v1h-3zM233 224h3v1h-3zM232 225h1v1h-1zM236 225h1v1h-1zM232 226h1v1h-1zM236 226h1v1h-1zM232 227h1v1h-1zM236 227h1v1h-1zM232 228h1v1h-1zM236 228h1v1h-1zM232 229h1v1h-1zM236 229h1v1h-1zM233 230h3v1h-3zM240 224h3v1h-3zM239 225h1v1h-1zM243 225h1v1h-1zM239 226h1v1h-1zM243 226h1v1h-1zM239 227h1v1h-1zM243 227h1v1h-1zM239 228h1v1h-1zM243 228h1v1h-1zM239 229h1v1h-1zM243 229h1v1h-1zM240 230h3v1h-3zM247 224h3v1h-3zM246 225h1v1h-1zM250 225h1v1h-1zM246 226h1v1h-1zM250 226h1v1h-1zM246 227h1v1h-1zM250 227h1v1h-1zM246 228h1v1h-1zM250 228h1v1h-1zM246 229h1v1h-1zM250 229h1v1h-1zM247 230h3v1h-3zM254 224h3v1h-3zM253 225h1v1h-1zM257 225h1v1h-1zM253 226h1v1h-1zM257 226h1v1h-1zM253 227h1v1h-1zM257 227h1v1h-1zM253 228h1v1h-1zM257 228h1v1h-1zM253 229h1v1h-1zM257 229h1v1h-1zM254 230h3v1h-3zM261 224h3v1h-3zM260 225h1v1h-1zM264 225h1v1h-1zM260 226h1v1h-1zM264 226h1v1h-1zM260 227h1v1h-1zM264 227h1v1h-1zM260 228h1v1h-1zM264 228h1v1h-1zM260 229h1v1h-1zM264 229h1v1h-1zM261 230h3v1h-3zM268 224h3v1h-3zM267 225h1v1h-1zM271 225h1v1h-1zM267 226h1v1h-1zM271 226h1v1h-1zM267 227h1v1h-1zM271 227h1v1h-1zM267 228h1v1h-1zM271 228h1v1h-1zM267 229h1v1h-1zM271 229h1v1h-1zM268 230h3v1h-3zM275 224h3v1h-3zM274 225h1v1h-1zM278 225h1v1h-1zM274 226h1v1h-1zM278 226h1v1h-1zM274 227h1v1h-1zM278 227h1v1h-1zM274 228h1v1h-1zM278 228h1v1h-1zM274 229h1v1h-1zM278 229h1v1h-1zM275 230h3v1h-3zM282 224h3v1h-3zM281 225h1v1h-1zM285 225h1v1h-1zM281 226h1v1h-1zM285 226h1v1h-1zM281 227h1v1h-1zM285 227h1v1h-1zM281 228h1v1h-1zM285 228h1v1h-1zM281 229h1v1h-1zM285 229h1v1h-1zM282 230h3v1h-3zM289 224h3v1h-3zM288 225h1v1h-1zM292 225h1v1h-1zM288 226h1v1h-1zM292 226h1v1h-1zM288 227h1v1h-1zM292 227h1v1h-1zM288 228h1v1h-1zM292 228h1v1h-1zM288 229h1v1h-1zM292 229h1v1h-1zM289 230h3v1h-3zM296 224h3v1h-3zM295 225h1v1h-1zM299 225h1v1h-1zM295 226h1v1h-1zM299 226h1v1h-1zM295 227h1v1h-1zM299 227h1v1h-1zM295 228h1v1h-1zM299 228h1v1h-1zM295 229h1v1h-1zM299 229h1v1h-1zM296 230h3v1h-3zM303 224h3v1h-3zM302 225h1v1h-1zM306 225h1v1h-1zM302 226h1v1h-1zM306 226h1v1h-1zM302 227h1v1h-1zM306 227h1v1h-1zM302 228h1v1h-1zM306 228h1v1h-1zM302 229h1v1h-1zM306 229h1v1h-1zM303 230h3v1h-3zM310 224h3v1h-3zM309 225h1v1h-1zM313 225h1v1h-1zM309 226h1v1h-1zM313 226h1v1h-1zM309 227h1v1h-1zM313 227h1v1h-1zM309 228h1v1h-1zM313 228h1v1h-1zM309 229h1v1h-1zM313 229h1v1h-1zM310 230h3v1h-3zM317 224h3v1h-3zM316 225h1v1h-1zM320 225h1v1h-1zM316 226h1v1h-1zM320 226h1v1h-1zM316 227h1v1h-1zM320 227h1v1h-1zM316 228h1v1h-1zM320 228h1v1h-1zM316 229h1v1h-1zM320 229h1v1h-1zM317 230h3v1h-3zM324 224h3v1h-3zM323 225h1v1h-1zM327 225h1v1h-1zM323 226h1v1h-1zM327 226h1v1h-1zM323 227h1v1h-1zM327 227h1v1h-1zM323 228h1v1h-1zM327 228h1v1h-1zM323 229h1v1h-1zM327 229h1v1h-1zM324 230h3v1h-3zM331 224h3v1h-3zM330 225h1v1h-1zM334 225h1v1h-1zM330 226h1v1h-1zM334 226h1v1h-1zM330 227h1v1h-1zM334 227h1v1h-1zM330 228h1v1h-1zM334 228h1v1h-1zM330 229h1v1h-1zM334 229h1v1h-1zM331 230h3v1h-3zM338 224h3v1h-3zM337 225h1v1h-1zM341 225h1v1h-1zM337 226h1v1h-1zM341 226h1v1h-1zM337 227h1v1h-1zM341 227h1v1h-1zM337 228h1v1h-1zM341 228h1v1h-1zM337 229h1v1h-1zM341 229h1v1h-1zM338 230h3v1h-3zM345 224h3v1h-3zM344 225h1v1h-1zM348 225h1v1h-1zM344 226h1v1h-1zM348 226h1v1h-1zM344 227h1v1h-1zM348 227h1v1h-1zM344 228h1v1h-1zM348 228h1v1h-1zM344 229h1v1h-1zM348 229h1v1h-1zM345 230h3v1h-3zM352 224h3v1h-3zM351 225h1v1h-1zM355 225h1v1h-1zM351 226h1v1h-1zM355 226h1v1h-1zM351 227h1v1h-1zM355 227h1v1h-1zM351 228h1v1h-1zM355 228h1v1h-1zM351 229h1v1h-1zM355 229h1v1h-1zM352 230h3v1h-3zM359 224h3v1h-3zM358 225h1v1h-1zM362 225h1v1h-1zM358 226h1v1h-1zM362 226h1v1h-1zM358 227h1v1h-1zM362 227h1v1h-1zM358 228h1v1h-1zM362 228h1v1h-1zM358 229h1v1h-1zM362 229h1v1h-1zM359 230h3v1h-3zM366 224h3v1h-3zM365 225h1v1h-1zM369 225h1v1h-1zM365 226h1v1h-1zM369 226h1v1h-1zM365 227h1v1h-1zM369 227h1v1h-1zM365 228h1v1h-1zM369 228h1v1h-1zM365 229h1v1h-1zM369 229h1v1h-1zM366 230h3v1h-3zM373 224h3v1h-3zM372 225h1v1h-1zM376 225h1v1h-1zM372 226h1v1h-1zM376 226h1v1h-1zM372 227h1v1h-1zM376 227h1v1h-1zM372 228h1v1h-1zM376 228h1v1h-1zM372 229h1v1h-1zM376 229h1v1h-1zM373 230h3v1h-3zM380 224h3v1h-3zM379 225h1v1h-1zM383 225h1v1h-1zM379 226h1v1h-1zM383 226h1v1h-1zM379 227h1v1h-1zM383 227h1v1h-1zM379 228h1v1h-1zM383 228h1v1h-1zM379 229h1v1h-1zM383 229h1v1h-1zM380 230h3v1h-3zM387 224h3v1h-3zM386 225h1v1h-1zM390 225h1v1h-1zM386 226h1v1h-1zM390 226h1v1h-1zM386 227h1v1h-1zM390 227h1v1h-1zM386 228h1v1h-1zM390 228h1v1h-1zM386 229h1v1h-1zM390 229h1v1h-1zM387 230h3v1h-3zM394 224h3v1h-3zM393 225h1v1h-1zM397 225h1v1h-1zM393 226h1v1h-1zM397 226h1v1h-1zM393 227h1v1h-1zM397 227h1v1h-1zM393 228h1v1h-1zM397 228h1v1h-1zM393 229h1v1h-1zM397 229h1v1h-1zM394 230h3v1h-3zM401 224h3v1h-3zM400 225h1v1h-1zM404 225h1v1h-1zM400 226h1v1h-1zM404 226h1v1h-1zM400 227h1v1h-1zM404 227h1v1h-1zM400 228h1v1h-1zM404 228h1v1h-1zM400 229h1v1h-1zM404 229h1v1h-1zM401 230h3v1h-3zM408 224h3v1h-3zM407 225h1v1h-1zM411 225h1v1h-1zM407 226h1v1h-1zM411 226h1v1h-1zM407 227h1v1h-1zM411 227h1v1h-1zM407 228h1v1h-1zM411 228h1v1h-1zM407 229h1v1h-1zM411 229h1v1h-1zM408 230h3v1h-3zM415 224h3v1h-3zM414 225h1v1h-1zM418 225h1v1h-1zM414 226h1v1h-1zM418 226h1v1h-1zM414 227h1v1h-1zM418 227h1v1h-1zM414 228h1v1h-1zM418 228h1v1h-1zM414 229h1v1h-1zM418 229h1v1h-1zM415 230h3v1h-3zM422 224h3v1h-3zM421 225h1v1h-1zM425 225h1v1h-1zM421 226h1v1h-1zM425 226h1v1h-1zM421 227h1v1h-1zM425 227h1v1h-1zM421 228h1v1h-1zM425 228h1v1h-1zM421 229h1v1h-1zM425 229h1v1h-1zM422 230h3v1h-3zM429 224h3v1h-3zM428 225h1v1h-1zM432 225h1v1h-1zM428 226h1v1h-1zM432 226h1v1h-1zM428 227h1v1h-1zM432 227h1v1h-1zM428 228h1v1h-1zM432 228h1v1h-1zM428 229h1v1h-1zM432 229h1v1h-1zM429 230h3v1h-3zM436 224h3v1h-3zM435 225h1v1h-1zM439 225h1v1h-1zM435 226h1v1h-1zM439 226h1v1h-1zM435 227h1v1h-1zM439 227h1v1h-1zM435 228h1v1h-1zM439 228h1v1h-1zM435 229h1v1h-1zM439 229h1v1h-1zM436 230h3v1h-3zM443 224h3v1h-3zM442 225h1v1h-1zM446 225h1v1h-1zM442 226h1v1h-1zM446 226h1v1h-1zM442 227h1v1h-1zM446 227h1v1h-1zM442 228h1v1h-1zM446 228h1v1h-1zM442 229h1v1h-1zM446 229h1v1h-1zM443 230h3v1h-3zM450 224h3v1h-3zM449 225h1v1h-1zM453 225h1v1h-1zM449 226h1v1h-1zM453 226h1v1h-1zM449 227h1v1h-1zM453 227h1v1h-1zM449 228h1v1h-1zM453 228h1v1h-1zM449 229h1v1h-1zM453 229h1v1h-1zM450 230h3v1h-3zM457 224h3v1h-3zM456 225h1v1h-1zM460 225h1v1h-1zM456 226h1v1h-1zM460 226h1v1h-1zM456 227h1v1h-1zM460 227h1v1h-1zM456 228h1v1h-1zM460 228h1v1h-1zM456 229h1v1h-1zM460 229h1v1h-1zM457 230h3v1h-3zM464 224h3v1h-3zM463 225h1v1h-1zM467 225h1v1h-1zM463 226h1v1h-1zM467 226h1v1h-1zM463 227h1v1h-1zM467 227h1v1h-1zM463 228h1v1h-1zM467 228h1v1h-1zM463 229h1v1h-1zM467 229h1v1h-1zM464 230h3v1h-3zM471 224h3v1h-3zM470 225h1v1h-1zM474 225h1v1h-1zM470 226h1v1h-1zM474 226h1v1h-1zM470 227h1v1h-1zM474 227h1v1h-1zM470 228h1v1h-1zM474 228h1v1h-1zM470 229h1v1h-1zM474 229h1v1h-1zM471 230h3v1h-3zM478 224h3v1h-3zM477 225h1v1h-1zM481 225h1v1h-1zM477 226h1v1h-1zM481 226h1v1h-1zM477 227h1v1h-1zM481 227h1v1h-1zM477 228h1v1h-1zM481 228h1v1h-1zM477 229h1v1h-1zM481 229h1v1h-1zM478 230h3v1h-3zM485 224h3v1h-3zM484 225h1v1h-1zM488 225h1v1h-1zM484 226h1v1h-1zM488 226h1v1h-1zM484 227h1v1h-1zM488 227h1v1h-1zM484 228h1v1h-1zM488 228h1v1h-1zM484 229h1v1h-1zM488 229h1v1h-1zM485 230h3v1h-3zM492 230h2v1h-2zM499 230h2v1h-2zM506 230h2v1h-2zM250 247h3v1h-3zM249 248h1v1h-1zM253 248h1v1h-1zM249 249h1v1h-1zM253 249h1v1h-1zM249 250h1v1h-1zM253 250h1v1h-1zM249 251h1v1h-1zM253 251h1v1h-1zM249 252h1v1h-1zM253 252h1v1h-1zM250 253h3v1h-3zM257 247h3v1h-3zM256 248h1v1h-1zM260 248h1v1h-1zM256 249h1v1h-1zM260 249h1v1h-1zM256 250h1v1h-1zM260 250h1v1h-1zM256 251h1v1h-1zM260 251h1v1h-1zM256 252h1v1h-1zM260 252h1v1h-1zM257 253h3v1h-3zM264 247h2v1h-2zM265 248h1v1h-1zM265 249h1v1h-1zM265 250h1v1h-1zM265 251h1v1h-1zM265 252h1v1h-1zM263 253h5v1h-5zM9 270h3v1h-3zM8 271h1v1h-1zM12 271h1v1h-1zM8 272h1v1h-1zM12 272h1v1h-1zM8 273h1v1h-1zM12 273h1v1h-1zM8 274h1v1h-1zM12 274h1v1h-1zM8 275h1v1h-1zM12 275h1v1h-1zM9 276h3v1h-3zM16 270h3v1h-3zM15 271h1v1h-1zM19 271h1v1h-1zM15 272h1v1h-1zM19 272h1v1h-1zM15 273h1v1h-1zM19 273h1v1h-1zM15 274h1v1h-1zM19 274h1v1h-1zM15 275h1v1h-1zM19 275h1v1h-1zM16 276h3v1h-3zM23 270h3v1h-3zM22 271h1v1h-1zM26 271h1v1h-1zM22 272h1v1h-1zM26 272h1v1h-1zM22 273h1v1h-1zM26 273h1v1h-1zM22 274h1v1h-1zM26 274h1v1h-1zM22 275h1v1h-1zM26 275h1v1h-1zM23 276h3v1h-3zM30 270h3v1h-3zM29 271h1v1h-1zM33 271h1v1h-1zM29 272h1v1h-1zM33 272h1v1h-1zM29 273h1v1h-1zM33 273h1v1h-1zM29 274h1v1h-1zM33 274h1v1h-1zM29 275h1v1h-1zM33 275h1v1h-1zM30 276h3v1h-3zM37 270h3v1h-3zM36 271h1v1h-1zM40 271h1v1h-1zM36 272h1v1h-1zM40 272h1v1h-1zM36 273h1v1h-1zM40 273h1v1h-1zM36 274h1v1h-1zM40 274h1v1h-1zM36 275h1v1h-1zM40 275h1v1h-1zM37 276h3v1h-3zM44 270h3v1h-3zM43 271h1v1h-1zM47 271h1v1h-1zM43 272h1v1h-1zM47 272h1v1h-1zM43 273h1v1h-1zM47 273h1v1h-1zM43 274h1v1h-1zM47 274h1v1h-1zM43 275h1v1h-1zM47 275h1v1h-1zM44 276h3v1h-3zM51 270h3v1h-3zM50 271h1v1h-1zM54 271h1v1h-1zM50 272h1v1h-1zM54 272h1v1h-1zM50 273h1v1h-1zM54 273h1v1h-1zM50 274h1v1h-1zM54 274h1v1h-1zM50 275h1v1h-1zM54 275h1v1h-1zM51 276h3v1h-3zM58 270h3v1h-3zM57 271h1v1h-1zM61 271h1v1h-1zM57 272h1v1h-1zM61 272h1v1h-1zM57 273h1v1h-1zM61 273h1v1h-1zM57 274h1v1h-1zM61 274h1v1h-1zM57 275h1v1h-1zM61 275h1v1h-1zM58 276h3v1h-3zM65 270h3v1h-3zM64 271h1v1h-1zM68 271h1v1h-1zM64 272h1v1h-1zM68 272h1v1h-1zM64 273h1v1h-1zM68 273h1v1h-1zM64 274h1v1h-1zM68 274h1v1h-1zM64 275h1v1h-1zM68 275h1v1h-1zM65 276h3v1h-3zM72 270h3v1h-3zM71 271h1v1h-1zM75 271h1v1h-1zM71 272h1v1h-1zM75 272h1v1h-1zM71 273h1v1h-1zM75 273h1v1h-1zM71 274h1v1h-1zM75 274h1v1h-1zM71 275h1v1h-1zM75 275h1v1h-1zM72 276h3v1h-3zM79 270h3v1h-3zM78 271h1v1h-1zM82 271h1v1h-1zM78 272h1v1h-1zM82 272h1v1h-1zM78 273h1v1h-1zM82 273h1v1h-1zM78 274h1v1h-1zM82 274h1v1h-1zM78 275h1v1h-1zM82 275h1v1h-1zM79 276h3v1h-3zM86 270h3v1h-3zM85 271h1v1h-1zM89 271h1v1h-1zM85 272h1v1h-1zM89 272h1v1h-1zM85 273h1v1h-1zM89 273h1v1h-1zM85 274h1v1h-1zM89 274h1v1h-1zM85 275h1v1h-1zM89 275h1v1h-1zM86 276h3v1h-3zM93 270h3v1h-3zM92 271h1v1h-1zM96 271h1v1h-1zM92 272h1v1h-1zM96 272h1v1h-1zM92 273h1v1h-1zM96 273h1v1h-1zM92 274h1v1h-1zM96 274h1v1h-1zM92 275h1v1h-1zM96 275h1v1h-1zM93 276h3v1h-3zM100 270h3v1h-3zM99 271h1v1h-1zM103 271h1v1h-1zM99 272h1v1h-1zM103 272h1v1h-1zM99 273h1v1h-1zM103 273h1v1h-1zM99 274h1v1h-1zM103 274h1v1h-1zM99 275h1v1h-1zM103 275h1v1h-1zM100 276h3v1h-3zM107 270h3v1h-3zM106 271h1v1h-1zM110 271h1v1h-1zM106 272h1v1h-1zM110 272h1v1h-1zM106 273h1v1h-1zM110 273h1v1h-1zM106 274h1v1h-1zM110 274h1v1h-1zM106 275h1v1h-1zM110 275h1v1h-1zM107 276h3v1h-3zM114 270h3v1h-3zM113 271h1v1h-1zM117 271h1v1h-1zM113 272h1v1h-1zM117 272h1v1h-1zM113 273h1v1h-1zM117 273h1v1h-1zM113 274h1v1h-1zM117 274h1v1h-1zM113 275h1v1h-1zM117 275h1v1h-1zM114 276h3v1h-3zM121 270h3v1h-3zM120 271h1v1h-1zM124 271h1v1h-1zM120 272h1v1h-1zM124 272h1v1h-1zM120 273h1v1h-1zM124 273h1v1h-1zM120 274h1v1h-1zM124 274h1v1h-1zM120 275h1v1h-1zM124 275h1v1h-1zM121 276h3v1h-3zM128 270h3v1h-3zM127 271h1v1h-1zM131 271h1v1h-1zM127 272h1v1h-1zM131 272h1v1h-1zM127 273h1v1h-1zM131 273h1v1h-1zM127 274h1v1h-1zM131 274h1v1h-1zM127 275h1v1h-1zM131 275h1v1h-1zM128 276h3v1h-3zM135 270h3v1h-3zM134 271h1v1h-1zM138 271h1v1h-1zM134 272h1v1h-1zM138 272h1v1h-1zM134 273h1v1h-1zM138 273h1v1h-1zM134 274h1v1h-1zM138 274h1v1h-1zM134 275h1v1h-1zM138 275h1v1h-1zM135 276h3v1h-3zM142 270h3v1h-3zM141 271h1v1h-1zM145 271h1v1h-1zM141 272h1v1h-1zM145 272h1v1h-1zM141 273h1v1h-1zM145 273h1v1h-1zM141 274h1v1h-1zM145 274h1v1h-1zM141 275h1v1h-1zM145 275h1v1h-1zM142 276h3v1h-3zM149 270h3v1h-3zM148 271h1v1h-1zM152 271h1v1h-1zM148 272h1v1h-1zM152 272h1v1h-1zM148 273h1v1h-1zM152 273h1v1h-1zM148 274h1v1h-1zM152 274h1v1h-1zM148 275h1v1h-1zM152 275h1v1h-1zM149 276h3v1h-3zM156 270h3v1h-3zM155 271h1v1h-1zM159 271h1v1h-1zM155 272h1v1h-1zM159 272h1v1h-1zM155 273h1v1h-1zM159 273h1v1h-1zM155 274h1v1h-1zM159 274h1v1h-1zM155 275h1v1h-1zM159 275h1v1h-1zM156 276h3v1h-3zM163 270h3v1h-3zM162 271h1v1h-1zM166 271h1v1h-1zM162 272h1v1h-1zM166 272h1v1h-1zM162 273h1v1h-1zM166 273h1v1h-1zM162 274h1v1h-1zM166 274h1v1h-1zM162 275h1v1h-1zM166 275h1v1h-1zM163 276h3v1h-3zM170 270h3v1h-3zM169 271h1v1h-1zM173 271h1v1h-1zM169 272h1v1h-1zM173 272h1v1h-1zM169 273h1v1h-1zM173 273h1v1h-1zM169 274h1v1h-1zM173 274h1v1h-1zM169 275h1v1h-1zM173 275h1v1h-1zM170 276h3v1h-3zM177 270h3v1h-3zM176 271h1v1h-1zM180 271h1v1h-1zM176 272h1v1h-1zM180 272h1v1h-1zM176 273h1v1h-1zM180 273h1v1h-1zM176 274h1v1h-1zM180 274h1v1h-1zM176 275h1v1h-1zM180 275h1v1h-1zM177 276h3v1h-3zM184 270h3v1h-3zM183 271h1v1h-1zM187 271h1v1h-1zM183 272h1v1h-1zM187 272h1v1h-1zM183 273h1v1h-1zM187 273h1v1h-1zM183 274h1v1h-1zM187 274h1v1h-1zM183 275h1v1h-1zM187 275h1v1h-1zM184 276h3v1h-3zM191 270h3v1h-3zM190 271h1v1h-1zM194 271h1v1h-1zM190 272h1v1h-1zM194 272h1v1h-1zM190 273h1v1h-1zM194 273h1v1h-1zM190 274h1v1h-1zM194 274h1v1h-1zM190 275h1v1h-1zM194 275h1v1h-1zM191 276h3v1h-3zM198 270h3v1h-3zM197 271h1v1h-1zM201 271h1v1h-1zM197 272h1v1h-1zM201 272h1v1h-1zM197 273h1v1h-1zM201 273h1v1h-1zM197 274h1v1h-1zM201 274h1v1h-1zM197 275h1v1h-1zM201 275h1v1h-1zM198 276h3v1h-3zM205 270h3v1h-3zM204 271h1v1h-1zM208 271h1v1h-1zM204 272h1v1h-1zM208 272h1v1h-1zM204 273h1v1h-1zM208 273h1v1h-1zM204 274h1v1h-1zM208 274h1v1h-1zM204 275h1v1h-1zM208 275h1v1h-1zM205 276h3v1h-3zM212 270h3v1h-3zM211 271h1v1h-1zM215 271h1v1h-1zM211 272h1v1h-1zM215 272h1v1h-1zM211 273h1v1h-1zM215 273h1v1h-1zM211 274h1v1h-1zM215 274h1v1h-1zM211 275h1v1h-1zM215 275h1v1h-1zM212 276h3v1h-3zM219 270h3v1h-3zM218 271h1v1h-1zM222 271h1v1h-1zM218 272h1v1h-1zM222 272h1v1h-1zM218 273h1v1h-1zM222 273h1v1h-1zM218 274h1v1h-1zM222 274h1v1h-1zM218 275h1v1h-1zM222 275h1v1h-1zM219 276h3v1h-3zM226 270h3v1h-3zM225 271h1v1h-1zM229 271h1v1h-1zM225 272h1v1h-1zM229 272h1v1h-1zM225 273h1v1h-1zM229 273h1v1h-1zM225 274h1v1h-1zM229 274h1v1h-1zM225 275h1v1h-1zM229 275h1v1h-1zM226 276h3v1h-3zM233 270h3v1h-3zM232 271h1v1h-1zM236 271h1v1h-1zM232 272h1v1h-1zM236 272h1v1h-1zM232 273h1v1h-1zM236 273h1v1h-1zM232 274h1v1h-1zM236 274h1v1h-1zM232 275h1v1h-1zM236 275h1v1h-1zM233 276h3v1h-3zM240 270h3v1h-3zM239 271h1v1h-1zM243 271h1v1h-1zM239 272h1v1h-1zM243 272h1v1h-1zM239 273h1v1h-1zM243 273h1v1h-1zM239 274h1v1h-1zM243 274h1v1h-1zM239 275h1v1h-1zM243 275h1v1h-1zM240 276h3v1h-3zM247 270h3v1h-3zM246 271h1v1h-1zM250 271h1v1h-1zM246 272h1v1h-1zM250 272h1v1h-1zM246 273h1v1h-1zM250 273h1v1h-1zM246 274h1v1h-1zM250 274h1v1h-1zM246 275h1v1h-1zM250 275h1v1h-1zM247 276h3v1h-3zM254 270h3v1h-3zM253 271h1v1h-1zM257 271h1v1h-1zM253 272h1v1h-1zM257 272h1v1h-1zM253 273h1v1h-1zM257 273h1v1h-1zM253 274h1v1h-1zM257 274h1v1h-1zM253 275h1v1h-1zM257 275h1v1h-1zM254 276h3v1h-3zM261 270h3v1h-3zM260 271h1v1h-1zM264 271h1v1h-1zM260 272h1v1h-1zM264 272h1v1h-1zM260 273h1v1h-1zM264 273h1v1h-1zM260 274h1v1h-1zM264 274h1v1h-1zM260 275h1v1h-1zM264 275h1v1h-1zM261 276h3v1h-3zM268 270h3v1h-3zM267 271h1v1h-1zM271 271h1v1h-1zM267 272h1v1h-1zM271 272h1v1h-1zM267 273h1v1h-1zM271 273h1v1h-1zM267 274h1v1h-1zM271 274h1v1h-1zM267 275h1v1h-1zM271 275h1v1h-1zM268 276h3v1h-3zM275 270h3v1h-3zM274 271h1v1h-1zM278 271h1v1h-1zM274 272h1v1h-1zM278 272h1v1h-1zM274 273h1v1h-1zM278 273h1v1h-1zM274 274h1v1h-1zM278 274h1v1h-1zM274 275h1v1h-1zM278 275h1v1h-1zM275 276h3v1h-3zM282 270h3v1h-3zM281 271h1v1h-1zM285 271h1v1h-1zM281 272h1v1h-1zM285 272h1v1h-1zM281 273h1v1h-1zM285 273h1v1h-1zM281 274h1v1h-1zM285 274h1v1h-1zM281 275h1v1h-1zM285 275h1v1h-1zM282 276h3v1h-3zM289 270h3v1h-3zM288 271h1v1h-1zM292 271h1v1h-1zM288 272h1v1h-1zM292 272h1v1h-1zM288 273h1v1h-1zM292 273h1v1h-1zM288 274h1v1h-1zM292 274h1v1h-1zM288 275h1v1h-1zM292 275h1v1h-1zM289 276h3v1h-3zM296 270h3v1h-3zM295 271h1v1h-1zM299 271h1v1h-1zM295 272h1v1h-1zM299 272h1v1h-1zM295 273h1v1h-1zM299 273h1v1h-1zM295 274h1v1h-1zM299 274h1v1h-1zM295 275h1v1h-1zM299 275h1v1h-1zM296 276h3v1h-3zM303 270h3v1h-3zM302 271h1v1h-1zM306 271h1v1h-1zM302 272h1v1h-1zM306 272h1v1h-1zM302 273h1v1h-1zM306 273h1v1h-1zM302 274h1v1h-1zM306 274h1v1h-1zM302 275h1v1h-1zM306 275h1v1h-1zM303 276h3v1h-3zM310 270h3v1h-3zM309 271h1v1h-1zM313 271h1v1h-1zM309 272h1v1h-1zM313 272h1v1h-1zM309 273h1v1h-1zM313 273h1v1h-1zM309 274h1v1h-1zM313 274h1v1h-1zM309 275h1v1h-1zM313 275h1v1h-1zM310 276h3v1h-3zM317 270h3v1h-3zM316 271h1v1h-1zM320 271h1v1h-1zM316 272h1v1h-1zM320 272h1v1h-1zM316 273h1v1h-1zM320 273h1v1h-1zM316 274h1v1h-1zM320 274h1v1h-1zM316 275h1v1h-1zM320 275h1v1h-1zM317 276h3v1h-3zM324 270h3v1h-3zM323 271h1v1h-1zM327 271h1v1h-1zM323 272h1v1h-1zM327 272h1v1h-1zM323 273h1v1h-1zM327 273h1v1h-1zM323 274h1v1h-1zM327 274h1v1h-1zM323 275h1v1h-1zM327 275h1v1h-1zM324 276h3v1h-3zM331 270h3v1h-3zM330 271h1v1h-1zM334 271h1v1h-1zM330 272h1v1h-1zM334 272h1v1h-1zM330 273h1v1h-1zM334 273h1v1h-1zM330 274h1v1h-1zM334 274h1v1h-1zM330 275h1v1h-1zM334 275h1v1h-1zM331 276h3v1h-3zM338 270h3v1h-3zM337 271h1v1h-1zM341 271h1v1h-1zM337 272h1v1h-1zM341 272h1v1h-1zM337 273h1v1h-1zM341 273h1v1h-1zM337 274h1v1h-1zM341 274h1v1h-1zM337 275h1v1h-1zM341 275h1v1h-1zM338 276h3v1h-3zM345 270h3v1h-3zM344 271h1v1h-1zM348 271h1v1h-1zM344 272h1v1h-1zM348 272h1v1h-1zM344 273h1v1h-1zM348 273h1v1h-1zM344 274h1v1h-1zM348 274h1v1h-1zM344 275h1v1h-1zM348 275h1v1h-1zM345 276h3v1h-3zM352 270h3v1h-3zM351 271h1v1h-1zM355 271h1v1h-1zM351 272h1v1h-1zM355 272h1v1h-1zM351 273h1v1h-1zM355 273h1v1h-1zM351 274h1v1h-1zM355 274h1v1h-1zM351 275h1v1h-1zM355 275h1v1h-1zM352 276h3v1h-3zM359 270h3v1h-3zM358 271h1v1h-1zM362 271h1v1h-1zM358 272h1v1h-1zM362 272h1v1h-1zM358 273h1v1h-1zM362 273h1v1h-1zM358 274h1v1h-1zM362 274h1v1h-1zM358 275h1v1h-1zM362 275h1v1h-1zM359 276h3v1h-3zM366 270h3v1h-3zM365 271h1v1h-1zM369 271h1v1h-1zM365 272h1v1h-1zM369 272h1v1h-1zM365 273h1v1h-1zM369 273h1v1h-1zM365 274h1v1h-1zM369 274h1v1h-1zM365 275h1v1h-1zM369 275h1v1h-1zM366 276h3v1h-3zM373 270h3v1h-3zM372 271h1v1h-1zM376 271h1v1h-1zM372 272h1v1h-1zM376 272h1v1h-1zM372 273h1v1h-1zM376 273h1v1h-1zM372 274h1v1h-1zM376 274h1v1h-1zM372 275h1v1h-1zM376 275h1v1h-1zM373 276h3v1h-3zM380 270h3v1h-3zM379 271h1v1h-1zM383 271h1v1h-1zM379 272h1v1h-1zM383 272h1v1h-1zM379 273h1v1h-1zM383 273h1v1h-1zM379 274h1v1h-1zM383 274h1v1h-1zM379 275h1v1h-1zM383 275h1v1h-1zM380 276h3v1h-3zM387 270h3v1h-3zM386 271h1v1h-1zM390 271h1v1h-1zM386 272h1v1h-1zM390 272h1v1h-1zM386 273h1v1h-1zM390 273h1v1h-1zM386 274h1v1h-1zM390 274h1v1h-1zM386 275h1v1h-1zM390 275h1v1h-1zM387 276h3v1h-3zM394 270h3v1h-3zM393 271h1v1h-1zM397 271h1v1h-1zM393 272h1v1h-1zM397 272h1v1h-1zM393 273h1v1h-1zM397 273h1v1h-1zM393 274h1v1h-1zM397 274h1v1h-1zM393 275h1v1h-1zM397 275h1v1h-1zM394 276h3v1h-3zM401 270h3v1h-3zM400 271h1v1h-1zM404 271h1v1h-1zM400 272h1v1h-1zM404 272h1v1h-1zM400 273h1v1h-1zM404 273h1v1h-1zM400 274h1v1h-1zM404 274h1v1h-1zM400 275h1v1h-1zM404 275h1v1h-1zM401 276h3v1h-3zM408 270h3v1h-3zM407 271h1v1h-1zM411 271h1v1h-1zM407 272h1v1h-1zM411 272h1v1h-1zM407 273h1v1h-1zM411 273h1v1h-1zM407 274h1v1h-1zM411 274h1v1h-1zM407 275h1v1h-1zM411 275h1v1h-1zM408 276h3v1h-3zM415 270h3v1h-3zM414 271h1v1h-1zM418 271h1v1h-1zM414 272h1v1h-1zM418 272h1v1h-1zM414 273h1v1h-1zM418 273h1v1h-1zM414 274h1v1h-1zM418 274h1v1h-1zM414 275h1v1h-1zM418 275h1v1h-1zM415 276h3v1h-3zM422 270h3v1h-3zM421 271h1v1h-1zM425 271h1v1h-1zM421 272h1v1h-1zM425 272h1v1h-1zM421 273h1v1h-1zM425 273h1v1h-1zM421 274h1v1h-1zM425 274h1v1h-1zM421 275h1v1h-1zM425 275h1v1h-1zM422 276h3v1h-3zM429 270h3v1h-3zM428 271h1v1h-1zM432 271h1v1h-1zM428 272h1v1h-1zM432 272h1v1h-1zM428 273h1v1h-1zM432 273h1v1h-1zM428 274h1v1h-1zM432 274h1v1h-1zM428 275h1v1h-1zM432 275h1v1h-1zM429 276h3v1h-3zM436 270h3v1h-3zM435 271h1v1h-1zM439 271h1v1h-1zM435 272h1v1h-1zM439 272h1v1h-1zM435 273h1v1h-1zM439 273h1v1h-1zM435 274h1v1h-1zM439 274h1v1h-1zM435 275h1v1h-1zM439 275h1v1h-1zM436 276h3v1h-3zM443 270h3v1h-3zM442 271h1v1h-1zM446 271h1v1h-1zM442 272h1v1h-1zM446 272h1v1h-1zM442 273h1v1h-1zM446 273h1v1h-1zM442 274h1v1h-1zM446 274h1v1h-1zM442 275h1v1h-1zM446 275h1v1h-1zM443 276h3v1h-3zM450 270h3v1h-3zM449 271h1v1h-1zM453 271h1v1h-1zM449 272h1v1h-1zM453 272h1v1h-1zM449 273h1v1h-1zM453 273h1v1h-1zM449 274h1v1h-1zM453 274h1v1h-1zM449 275h1v1h-1zM453 275h1v1h-1zM450 276h3v1h-3zM457 270h3v1h-3zM456 271h1v1h-1zM460 271h1v1h-1zM456 272h1v1h-1zM460 272h1v1h-1zM456 273h1v1h-1zM460 273h1v1h-1zM456 274h1v1h-1zM460 274h1v1h-1zM456 275h1v1h-1zM460 275h1v1h-1zM457 276h3v1h-3zM464 270h3v1h-3zM463 271h1v1h-1zM467 271h1v1h-1zM463 272h1v1h-1zM467 272h1v1h-1zM463 273h1v1h-1zM467 273h1v1h-1zM463 274h1v1h-1zM467 274h1v1h-1zM463 275h1v1h-1zM467 275h1v1h-1zM464 276h3v1h-3zM471 270h3v1h-3zM470 271h1v1h-1zM474 271h1v1h-1zM470 272h1v1h-1zM474 272h1v1h-1zM470 273h1v1h-1zM474 273h1v1h-1zM470 274h1v1h-1zM474 274h1v1h-1zM470 275h1v1h-1zM474 275h1v1h-1zM471 276h3v1h-3zM478 270h3v1h-3zM477 271h1v1h-1zM481 271h1v1h-1zM477 272h1v1h-1zM481 272h1v1h-1zM477 273h1v1h-1zM481 273h1v1h-1zM477 274h1v1h-1zM481 274h1v1h-1zM477 275h1v1h-1zM481 275h1v1h-1zM478 276h3v1h-3zM485 270h3v1h-3zM484 271h1v1h-1zM488 271h1v1h-1zM484 272h1v1h-1zM488 272h1v1h-1zM484 273h1v1h-1zM488 273h1v1h-1zM484 274h1v1h-1zM488 274h1v1h-1zM484 275h1v1h-1zM488 275h1v1h-1zM485 276h3v1h-3zM492 276h2v1h-2zM499 276h2v1h-2zM506 276h2v1h-2zM257 293h3v1h-3zM256 294h1v1h-1zM260 294h1v1h-1zM256 295h1v1h-1zM260 295h1v1h-1zM256 296h1v1h-1zM260 296h1v1h-1zM256 297h1v1h-1zM260 297h1v1h-1zM256 298h1v1h-1zM260 298h1v1h-1zM257 299h3v1h-3zM254 316h3v1h-3zM253 317h1v1h-1zM257 317h1v1h-1zM253 318h1v1h-1zM257 318h1v1h-1zM253 319h1v1h-1zM257 319h1v1h-1zM253 320h1v1h-1zM257 320h1v1h-1zM253 321h1v1h-1zM257 321h1v1h-1zM254 322h3v1h-3zM261 316h3v1h-3zM260 317h1v1h-1zM264 317h1v1h-1zM260 318h1v1h-1zM264 318h1v1h-1zM260 319h1v1h-1zM264 319h1v1h-1zM260 320h1v1h-1zM264 320h1v1h-1zM260 321h1v1h-1zM264 321h1v1h-1zM261 322h3v1h-3zM257 362h3v1h-3zM256 363h1v1h-1zM260 363h1v1h-1zM256 364h1v1h-1zM260 364h1v1h-1zM256 365h1v1h-1zM260 365h1v1h-1zM256 366h1v1h-1zM260 366h1v1h-1zM256 367h1v1h-1zM260 367h1v1h-1zM257 368h3v1h-3zM257 385h3v1h-3zM256 386h1v1h-1zM260 386h1v1h-1zM256 387h1v1h-1zM260 387h1v1h-1zM256 388h1v1h-1zM260 388h1v1h-1zM256 389h1v1h-1zM260 389h1v1h-1zM256 390h1v1h-1zM260 390h1v1h-1zM257 391h3v1h-3zM254 408h2v1h-2zM255 409h1v1h-1zM255 410h1v1h-1zM255 411h1v1h-1zM255 412h1v1h-1zM255 413h1v1h-1zM253 414h5v1h-5zM261 408h3v1h-3zM260 409h1v1h-1zM264 409h1v1h-1zM260 410h1v1h-1zM264 410h1v1h-1zM260 411h1v1h-1zM264 411h1v1h-1zM260 412h1v1h-1zM264 412h1v1h-1zM260 413h1v1h-1zM264 413h1v1h-1zM261 414h3v1h-3zM257 431h3v1h-3zM256 432h1v1h-1zM260 432h1v1h-1zM256 433h1v1h-1zM260 433h1v1h-1zM256 434h1v1h-1zM260 434h1v1h-1zM256 435h1v1h-1zM260 435h1v1h-1zM256 436h1v1h-1zM260 436h1v1h-1zM257 437h3v1h-3zM257 454h3v1h-3zM256 455h1v1h-1zM260 455h1v1h-1zM256 456h1v1h-1zM260 456h1v1h-1zM256 457h1v1h-1zM260 457h1v1h-1zM256 458h1v1h-1zM260 458h1v1h-1zM256 459h1v1h-1zM260 459h1v1h-1zM257 460h3v1h-3zM257 477h3v1h-3zM256 478h1v1h-1zM260 478h1v1h-1zM256 479h1v1h-1zM260 479h1v1h-1zM256 480h1v1h-1zM260 480h1v1h-1zM256 481h1v1h-1zM260 481h1v1h-1zM256 482h1v1h-1zM260 482h1v1h-1zM257 483h3v1h-3zM257 546h3v1h-3zM256 547h1v1h-1zM260 547h1v1h-1zM256 548h1v1h-1zM260 548h1v1h-1zM256 549h1v1h-1zM260 549h1v1h-1zM256 550h1v1h-1zM260 550h1v1h-1zM256 551h1v1h-1zM260 551h1v1h-1zM257 552h3v1h-3zM257 569h3v1h-3zM256 570h1v1h-1zM260 570h1v1h-1zM256 571h1v1h-1zM260 571h1v1h-1zM256 572h1v1h-1zM260 572h1v1h-1zM256 573h1v1h-1zM260 573h1v1h-1zM256 574h1v1h-1zM260 574h1v1h-1zM257 575h3v1h-3zM259 592h2v1h-2zM258 593h1v1h-1zM257 594h4v1h-4zM258 595h1v1h-1zM258 596h1v1h-1zM258 597h1v1h-1zM257 598h4v1h-4zM259 615h2v1h-2zM258 616h1v1h-1zM257 617h4v1h-4zM258 618h1v1h-1zM258 619h1v1h-1zM258 620h1v1h-1zM257 621h4v1h-4zM259 638h2v1h-2zM258 639h1v1h-1zM257 640h4v1h-4zM258 641h1v1h-1zM258 642h1v1h-1zM258 643h1v1h-1zM257 644h4v1h-4z" fill="#d8d8d8"/><line x1="3.5" y1="16" x2="3.5" y2="659" stroke="#8c8a2a" stroke-width="1"/><rect x="2.5" y="0.5" width="11" height="15" fill="#cccc00" stroke="#e0e0e0" stroke-width="1"/><path d="M6 2h3v1h-3zM5 3h1v1h-1zM9 3h1v1h-1zM5 4h1v1h-1zM9 4h1v1h-1zM5 5h1v1h-1zM9 5h1v1h-1zM5 6h1v1h-1zM9 6h1v1h-1zM5 7h1v1h-1zM9 7h1v1h-1zM6 8h3v1h-3z" fill="#000"/><line x1="259.5" y1="37" x2="259.5" y2="659" stroke="#dd0000" stroke-width="1"/><rect x="253.5" y="18.5" width="11" height="17" fill="#cc0000" stroke="#e40000" stroke-width="1"/><path d="M256 21h5v1h-5zM256 22h1v1h-1zM258 22h1v1h-1zM260 22h1v1h-1zM258 23h1v1h-1zM258 24h1v1h-1zM258 25h1v1h-1zM258 26h1v1h-1zM257 27h3v1h-3z" fill="#000"/></svg>
</body></html>
